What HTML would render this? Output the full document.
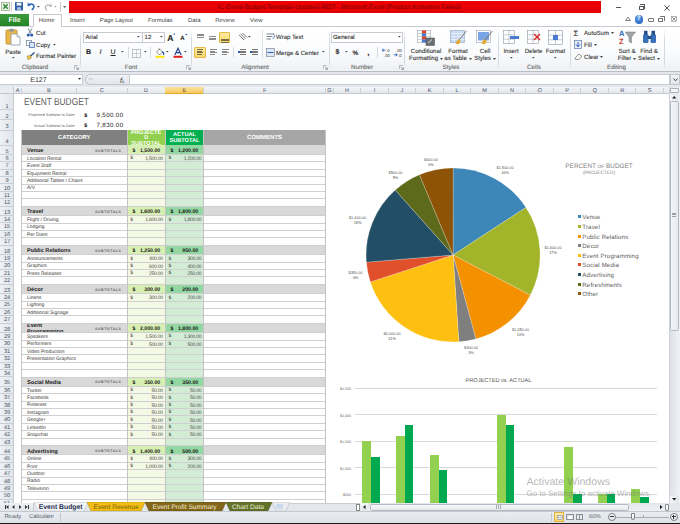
<!DOCTYPE html><html><head><meta charset="utf-8"><style>
html,body{margin:0;padding:0;width:680px;height:524px;overflow:hidden;background:#fff;}
body{position:relative;font-family:"Liberation Sans", sans-serif;text-rendering:geometricPrecision;}
div{box-sizing:border-box;}
.rb{-webkit-text-stroke:0.12px currentColor;}
</style></head><body>
<div style="position:absolute;left:0px;top:0px;width:680px;height:14px;background:#fdfdfe;"></div>
<div style="position:absolute;left:0px;top:0px;width:680px;height:13.5px;background:#ffffff;"></div>
<svg style="position:absolute;left:1px;top:1.5px" width="9" height="9" viewBox="0 0 9 9">
<rect x="0.4" y="0.4" width="8.2" height="8.2" fill="#eef4ea" stroke="#9ab08a" stroke-width="0.8"/>
<path d="M2.3 2.2 L6.7 6.8 M6.7 2.2 L2.3 6.8" stroke="#2a8a3a" stroke-width="1.5"/>
</svg>
<div style="position:absolute;left:11.2px;top:2px;width:0.8px;height:9.5px;background:#c8ccd2;"></div>
<svg style="position:absolute;left:15px;top:2px" width="8" height="8.5" viewBox="0 0 8 8.5">
<rect x="0" y="0" width="8" height="8.5" fill="#2d5ea6" rx="0.8"/>
<rect x="1.6" y="0.6" width="4.8" height="3" fill="#eef2f8"/>
<rect x="2" y="5.2" width="4" height="3.3" fill="#a8bedc"/>
</svg>
<svg style="position:absolute;left:26.5px;top:2px" width="8" height="9" viewBox="0 0 8 9">
<path d="M2 2.6 C5 1 8 3 6.5 6 L4.8 8" stroke="#2a64b8" stroke-width="1.5" fill="none"/>
<path d="M0.5 0.5 L0.8 4.6 L4 3.2 Z" fill="#2a64b8"/>
</svg>
<svg style="position:absolute;left:37.23px;top:5.59px;overflow:visible" width="2.79" height="1.62" viewBox="0 0 2.79 1.62"><path d="M0 0 H2.79 L1.40 1.62 Z" fill="#333"/></svg>
<svg style="position:absolute;left:43.5px;top:2.5px" width="8" height="8" viewBox="0 0 8 8">
<path d="M6 2.4 C3.5 0.8 0.5 2.5 1.5 5.5 L2.8 7.5" stroke="#b0b0b0" stroke-width="1.2" fill="none"/>
<path d="M7.6 0.5 L7.4 4.3 L4.6 3 Z" fill="#b0b0b0"/>
</svg>
<svg style="position:absolute;left:54.23px;top:5.59px;overflow:visible" width="2.79" height="1.62" viewBox="0 0 2.79 1.62"><path d="M0 0 H2.79 L1.40 1.62 Z" fill="#aaa"/></svg>
<div style="position:absolute;left:60.3px;top:2px;width:0.8px;height:9.5px;background:#c8ccd2;"></div>
<svg style="position:absolute;left:63.07px;top:5.81px;overflow:visible" width="3.41" height="1.98" viewBox="0 0 3.41 1.98"><path d="M0 0 H3.41 L1.71 1.98 Z" fill="#666"/></svg>
<div style="position:absolute;left:68.8px;top:1px;width:532px;height:11.5px;background:linear-gradient(#f00000,#e00000);"></div>
<div style="position:absolute;left:217.50px;top:3.86px;font-size:6.40px;line-height:7.68px;color:#8c0000;font-weight:normal;white-space:nowrap;-webkit-text-stroke:0.1px #8c0000;">IC-Event-Budget-Template-Updated-8857 - Microsoft Excel (Product Activation Failed)</div>
<div style="position:absolute;left:615.5px;top:7.2px;width:5.5px;height:0.9px;background:#555;"></div>
<div style="position:absolute;left:639px;top:5.5px;width:4.6px;height:4.6px;border:0.9px solid #555;"></div>
<div style="position:absolute;left:640.3px;top:4.2px;width:4.6px;height:4.6px;border-top:0.9px solid #555;border-right:0.9px solid #555;"></div>
<svg style="position:absolute;left:663.5px;top:4.5px" width="6" height="6" viewBox="0 0 6 6">
<path d="M0.3 0.3 L5.7 5.7 M5.7 0.3 L0.3 5.7" stroke="#444" stroke-width="0.9"/></svg>
<div style="position:absolute;left:0px;top:13.5px;width:680px;height:12.5px;background:#ffffff;"></div>
<div style="position:absolute;left:0px;top:13.8px;width:29px;height:12px;background:linear-gradient(#3e9a3e,#228422);"></div>
<div style="position:absolute;left:-85.50px;top:16.50px;width:200px;text-align:center;font-size:7.00px;line-height:8.40px;color:#ffffff;font-weight:bold;white-space:nowrap;">File</div>
<div style="position:absolute;left:32.5px;top:13.5px;width:29.5px;height:13px;background:#ffffff;border:1px solid #c5cad1;border-bottom:none;"></div>
<div style="position:absolute;left:-53.40px;top:17.66px;width:200px;text-align:center;font-size:5.90px;line-height:7.08px;color:#444;font-weight:normal;white-space:nowrap;">Home</div>
<div style="position:absolute;left:-22.70px;top:17.66px;width:200px;text-align:center;font-size:5.90px;line-height:7.08px;color:#444;font-weight:normal;white-space:nowrap;">Insert</div>
<div style="position:absolute;left:16.30px;top:17.66px;width:200px;text-align:center;font-size:5.90px;line-height:7.08px;color:#444;font-weight:normal;white-space:nowrap;">Page Layout</div>
<div style="position:absolute;left:60.20px;top:17.66px;width:200px;text-align:center;font-size:5.90px;line-height:7.08px;color:#444;font-weight:normal;white-space:nowrap;">Formulas</div>
<div style="position:absolute;left:94.30px;top:17.66px;width:200px;text-align:center;font-size:5.90px;line-height:7.08px;color:#444;font-weight:normal;white-space:nowrap;">Data</div>
<div style="position:absolute;left:125.00px;top:17.66px;width:200px;text-align:center;font-size:5.90px;line-height:7.08px;color:#444;font-weight:normal;white-space:nowrap;">Review</div>
<div style="position:absolute;left:156.10px;top:17.66px;width:200px;text-align:center;font-size:5.90px;line-height:7.08px;color:#444;font-weight:normal;white-space:nowrap;">View</div>
<div style="position:absolute;left:0px;top:25.5px;width:32.5px;height:1px;background:#c5cad1;"></div>
<div style="position:absolute;left:62px;top:25.5px;width:618px;height:1px;background:#c5cad1;"></div>
<svg style="position:absolute;left:625px;top:16px" width="6" height="5" viewBox="0 0 6 5">
<path d="M0.5 4.5 L3 1 L5.5 4.5 Z" fill="none" stroke="#666" stroke-width="0.8"/></svg>
<div style="position:absolute;left:634.5px;top:15.2px;width:8.5px;height:8.5px;border-radius:50%;background:radial-gradient(circle at 40% 35%,#5a9ae6,#1f5cb8);color:#fff;font-size:6.5px;line-height:8.5px;text-align:center;font-weight:bold;">?</div>
<div style="position:absolute;left:648px;top:18px;width:6px;height:3.5px;border:0.8px solid #777;border-radius:1px;"></div>
<div style="position:absolute;left:658px;top:17.5px;width:5px;height:4.5px;border:0.8px solid #777;"></div>
<div style="position:absolute;left:659.5px;top:16px;width:5px;height:4.5px;border-top:0.8px solid #777;border-right:0.8px solid #777;"></div>
<svg style="position:absolute;left:671px;top:16px" width="6" height="6" viewBox="0 0 6 6">
<rect x="0.4" y="0.4" width="5.2" height="5.2" fill="none" stroke="#888" stroke-width="0.6"/>
<path d="M1.2 1.2 L4.8 4.8 M4.8 1.2 L1.2 4.8" stroke="#666" stroke-width="0.7"/></svg>
<div class="rb">
<div style="position:absolute;left:0px;top:26.5px;width:680px;height:44.5px;background:linear-gradient(#ffffff 0%,#fbfcfd 55%,#eef1f4 100%);"></div>
<div style="position:absolute;left:0px;top:70.5px;width:680px;height:1.5px;background:#b9bec6;"></div>
<div style="position:absolute;left:79.6px;top:28px;width:1px;height:42px;background:linear-gradient(rgba(210,214,220,0),#d5d9df 30%,#d5d9df 80%,rgba(210,214,220,0));"></div>
<div style="position:absolute;left:191.2px;top:28px;width:1px;height:42px;background:linear-gradient(rgba(210,214,220,0),#d5d9df 30%,#d5d9df 80%,rgba(210,214,220,0));"></div>
<div style="position:absolute;left:328.5px;top:28px;width:1px;height:42px;background:linear-gradient(rgba(210,214,220,0),#d5d9df 30%,#d5d9df 80%,rgba(210,214,220,0));"></div>
<div style="position:absolute;left:404.4px;top:28px;width:1px;height:42px;background:linear-gradient(rgba(210,214,220,0),#d5d9df 30%,#d5d9df 80%,rgba(210,214,220,0));"></div>
<div style="position:absolute;left:497.8px;top:28px;width:1px;height:42px;background:linear-gradient(rgba(210,214,220,0),#d5d9df 30%,#d5d9df 80%,rgba(210,214,220,0));"></div>
<div style="position:absolute;left:569.7px;top:28px;width:1px;height:42px;background:linear-gradient(rgba(210,214,220,0),#d5d9df 30%,#d5d9df 80%,rgba(210,214,220,0));"></div>
<div style="position:absolute;left:664px;top:28px;width:1px;height:42px;background:linear-gradient(rgba(210,214,220,0),#d5d9df 30%,#d5d9df 80%,rgba(210,214,220,0));"></div>
<div style="position:absolute;left:-65.00px;top:63.98px;width:200px;text-align:center;font-size:6.20px;line-height:7.44px;color:#6f6f6f;font-weight:normal;white-space:nowrap;">Clipboard</div>
<div style="position:absolute;left:31.00px;top:63.98px;width:200px;text-align:center;font-size:6.20px;line-height:7.44px;color:#6f6f6f;font-weight:normal;white-space:nowrap;">Font</div>
<div style="position:absolute;left:155.00px;top:63.98px;width:200px;text-align:center;font-size:6.20px;line-height:7.44px;color:#6f6f6f;font-weight:normal;white-space:nowrap;">Alignment</div>
<div style="position:absolute;left:262.00px;top:63.98px;width:200px;text-align:center;font-size:6.20px;line-height:7.44px;color:#6f6f6f;font-weight:normal;white-space:nowrap;">Number</div>
<div style="position:absolute;left:351.00px;top:63.98px;width:200px;text-align:center;font-size:6.20px;line-height:7.44px;color:#6f6f6f;font-weight:normal;white-space:nowrap;">Styles</div>
<div style="position:absolute;left:434.00px;top:63.98px;width:200px;text-align:center;font-size:6.20px;line-height:7.44px;color:#6f6f6f;font-weight:normal;white-space:nowrap;">Cells</div>
<div style="position:absolute;left:516.50px;top:63.98px;width:200px;text-align:center;font-size:6.20px;line-height:7.44px;color:#6f6f6f;font-weight:normal;white-space:nowrap;">Editing</div>
<svg style="position:absolute;left:74px;top:64.5px" width="5" height="5" viewBox="0 0 5 5"><path d="M0.4 4 V0.4 H4" stroke="#9a9ea4" stroke-width="0.7" fill="none"/><path d="M1.8 1.8 L4.2 4.2 M4.4 2.4 V4.4 H2.4" stroke="#6a6e74" stroke-width="0.6" fill="none"/></svg>
<svg style="position:absolute;left:186px;top:64.5px" width="5" height="5" viewBox="0 0 5 5"><path d="M0.4 4 V0.4 H4" stroke="#9a9ea4" stroke-width="0.7" fill="none"/><path d="M1.8 1.8 L4.2 4.2 M4.4 2.4 V4.4 H2.4" stroke="#6a6e74" stroke-width="0.6" fill="none"/></svg>
<svg style="position:absolute;left:322.5px;top:64.5px" width="5" height="5" viewBox="0 0 5 5"><path d="M0.4 4 V0.4 H4" stroke="#9a9ea4" stroke-width="0.7" fill="none"/><path d="M1.8 1.8 L4.2 4.2 M4.4 2.4 V4.4 H2.4" stroke="#6a6e74" stroke-width="0.6" fill="none"/></svg>
<svg style="position:absolute;left:398.5px;top:64.5px" width="5" height="5" viewBox="0 0 5 5"><path d="M0.4 4 V0.4 H4" stroke="#9a9ea4" stroke-width="0.7" fill="none"/><path d="M1.8 1.8 L4.2 4.2 M4.4 2.4 V4.4 H2.4" stroke="#6a6e74" stroke-width="0.6" fill="none"/></svg>
<svg style="position:absolute;left:5px;top:28px" width="17" height="18" viewBox="0 0 17 18">
<rect x="1" y="2" width="11" height="14" rx="1" fill="#e9b84a" stroke="#b88a2a" stroke-width="0.8"/>
<rect x="4" y="0.8" width="5" height="3" rx="1" fill="#9a9a9a"/>
<path d="M6 6 L12 6 L15 9 L15 17 L6 17 Z" fill="#ffffff" stroke="#8c97a6" stroke-width="0.8"/>
<path d="M12 6 L12 9 L15 9" fill="#dde3ea" stroke="#8c97a6" stroke-width="0.6"/>
</svg>
<div style="position:absolute;left:-87.00px;top:48.74px;width:200px;text-align:center;font-size:6.10px;line-height:7.32px;color:#3c3c3c;font-weight:normal;white-space:nowrap;">Paste</div>
<svg style="position:absolute;left:11.61px;top:56.99px;overflow:visible" width="2.79" height="1.62" viewBox="0 0 2.79 1.62"><path d="M0 0 H2.79 L1.40 1.62 Z" fill="#444"/></svg>
<svg style="position:absolute;left:26px;top:28px" width="8" height="9" viewBox="0 0 8 9">
<path d="M2 0.5 L5 5.5 M6 0.5 L3 5.5" stroke="#6a7a8c" stroke-width="0.9"/>
<circle cx="2.3" cy="7" r="1.6" fill="#2c5fae"/><circle cx="5.7" cy="7" r="1.6" fill="#2c5fae"/>
</svg>
<div style="position:absolute;left:36.00px;top:30.24px;font-size:6.10px;line-height:7.32px;color:#3c3c3c;font-weight:normal;white-space:nowrap;">Cut</div>
<svg style="position:absolute;left:25.5px;top:40px" width="9" height="8" viewBox="0 0 9 8">
<rect x="0.5" y="0.5" width="5" height="5" fill="#fff" stroke="#7a8aa0" stroke-width="0.8"/>
<rect x="3.5" y="2.5" width="5" height="5" fill="#d9e6f6" stroke="#4a72b0" stroke-width="0.8"/>
</svg>
<div style="position:absolute;left:36.00px;top:42.24px;font-size:6.10px;line-height:7.32px;color:#3c3c3c;font-weight:normal;white-space:nowrap;">Copy</div>
<svg style="position:absolute;left:53.23px;top:43.79px;overflow:visible" width="2.79" height="1.62" viewBox="0 0 2.79 1.62"><path d="M0 0 H2.79 L1.40 1.62 Z" fill="#444"/></svg>
<svg style="position:absolute;left:25.5px;top:52px" width="9" height="8" viewBox="0 0 9 8">
<path d="M8.5 0.5 L4 4.5" stroke="#2c4f90" stroke-width="1.4"/>
<path d="M1 4 L4.5 3.5 L5.5 6 L2 7.8 Z" fill="#e7c24e" stroke="#9a8030" stroke-width="0.5"/>
</svg>
<div style="position:absolute;left:36.00px;top:53.44px;font-size:6.10px;line-height:7.32px;color:#3c3c3c;font-weight:normal;white-space:nowrap;">Format Painter</div>
<div style="position:absolute;left:83px;top:31.5px;width:59.5px;height:11px;background:#fff;border:1px solid #c7cbd1;"></div>
<div style="position:absolute;left:85.50px;top:34.44px;font-size:6.10px;line-height:7.32px;color:#333;font-weight:normal;white-space:nowrap;">Arial</div>
<svg style="position:absolute;left:137.22px;top:36.19px;overflow:visible" width="2.79" height="1.62" viewBox="0 0 2.79 1.62"><path d="M0 0 H2.79 L1.40 1.62 Z" fill="#444"/></svg>
<div style="position:absolute;left:142.2px;top:31.5px;width:22.4px;height:11px;background:#fff;border:1px solid #c7cbd1;"></div>
<div style="position:absolute;left:144.50px;top:34.44px;font-size:6.10px;line-height:7.32px;color:#333;font-weight:normal;white-space:nowrap;">12</div>
<svg style="position:absolute;left:160.22px;top:36.19px;overflow:visible" width="2.79" height="1.62" viewBox="0 0 2.79 1.62"><path d="M0 0 H2.79 L1.40 1.62 Z" fill="#444"/></svg>
<div style="position:absolute;left:167.30px;top:33.34px;font-size:8.60px;line-height:10.32px;color:#2a2a2a;font-weight:bold;white-space:nowrap;font-family:"Liberation Serif",serif;">A</div>
<svg style="position:absolute;left:172.70px;top:32.78px;overflow:visible" width="2.48" height="1.44" viewBox="0 0 2.48 1.44"><path d="M0 1.44 H2.48 L1.24 0 Z" fill="#2b5fb4"/></svg>
<div style="position:absolute;left:180.20px;top:35.90px;font-size:6.00px;line-height:7.20px;color:#2a2a2a;font-weight:bold;white-space:nowrap;font-family:"Liberation Serif",serif;">A</div>
<svg style="position:absolute;left:184.70px;top:33.78px;overflow:visible" width="2.48" height="1.44" viewBox="0 0 2.48 1.44"><path d="M0 0 H2.48 L1.24 1.44 Z" fill="#2b5fb4"/></svg>
<div style="position:absolute;left:86.00px;top:49.20px;font-size:7.00px;line-height:8.40px;color:#222;font-weight:bold;white-space:nowrap;font-family:"Liberation Serif",serif;">B</div>
<div style="position:absolute;left:99.50px;top:49.20px;font-size:7.00px;line-height:8.40px;color:#222;font-weight:normal;white-space:nowrap;font-style:italic;font-family:"Liberation Serif",serif;">I</div>
<div style="position:absolute;left:110.50px;top:49.20px;font-size:7.00px;line-height:8.40px;color:#222;font-weight:normal;white-space:nowrap;text-decoration:underline;font-family:"Liberation Serif",serif;">U</div>
<svg style="position:absolute;left:121.22px;top:51.39px;overflow:visible" width="2.79" height="1.62" viewBox="0 0 2.79 1.62"><path d="M0 0 H2.79 L1.40 1.62 Z" fill="#444"/></svg>
<div style="position:absolute;left:127.5px;top:47px;width:1px;height:11px;background:#d8dce2;"></div>
<svg style="position:absolute;left:132px;top:48.5px" width="9" height="9" viewBox="0 0 9 9">
<rect x="0.5" y="0.5" width="8" height="8" fill="none" stroke="#b0b4ba" stroke-width="0.8"/>
<path d="M4.5 0.5 V8.5 M0.5 4.5 H8.5" stroke="#b0b4ba" stroke-width="0.6"/></svg>
<svg style="position:absolute;left:144.22px;top:51.39px;overflow:visible" width="2.79" height="1.62" viewBox="0 0 2.79 1.62"><path d="M0 0 H2.79 L1.40 1.62 Z" fill="#444"/></svg>
<div style="position:absolute;left:149.5px;top:47px;width:1px;height:11px;background:#d8dce2;"></div>
<svg style="position:absolute;left:154.5px;top:46.5px" width="10" height="11" viewBox="0 0 10 11">
<path d="M1.5 5 L4.5 2 L7.5 5 L4.5 8 Z" fill="#fff" stroke="#666" stroke-width="0.7"/>
<path d="M4 1 L4.5 3" stroke="#666" stroke-width="0.6"/>
<path d="M7 4.5 C8.8 5.5 9.2 7 8.3 7.8" stroke="#1f4fa8" stroke-width="1.3" fill="none"/>
<rect x="0.5" y="8.8" width="9" height="2" fill="#ffe600"/></svg>
<svg style="position:absolute;left:165.72px;top:51.39px;overflow:visible" width="2.79" height="1.62" viewBox="0 0 2.79 1.62"><path d="M0 0 H2.79 L1.40 1.62 Z" fill="#444"/></svg>
<svg style="position:absolute;left:172.5px;top:46.5px" width="10" height="11" viewBox="0 0 10 11">
<path d="M1.8 8 L5 1.2 L8.2 8 M3.2 5.6 H6.8" stroke="#1f3f8f" stroke-width="1.1" fill="none"/>
<rect x="0.5" y="8.8" width="9" height="2" fill="#e02020"/></svg>
<svg style="position:absolute;left:184.22px;top:51.39px;overflow:visible" width="2.79" height="1.62" viewBox="0 0 2.79 1.62"><path d="M0 0 H2.79 L1.40 1.62 Z" fill="#444"/></svg>
<div style="position:absolute;left:196.5px;top:33.5px;width:7.5px;height:1px;background:#8a8a8a;"></div>
<div style="position:absolute;left:196.5px;top:35.1px;width:7.5px;height:1px;background:#8a8a8a;"></div>
<div style="position:absolute;left:196.5px;top:36.7px;width:7.5px;height:1px;background:#8a8a8a;"></div>
<div style="position:absolute;left:208.5px;top:36.0px;width:7.5px;height:1px;background:#8a8a8a;"></div>
<div style="position:absolute;left:208.5px;top:37.6px;width:7.5px;height:1px;background:#8a8a8a;"></div>
<div style="position:absolute;left:208.5px;top:39.2px;width:7.5px;height:1px;background:#8a8a8a;"></div>
<div style="position:absolute;left:219.2px;top:31.7px;width:11px;height:11.2px;background:linear-gradient(#fdeba0,#fbd970);border:1px solid #e3b948;border-radius:1px;"></div>
<div style="position:absolute;left:221px;top:38.5px;width:7.5px;height:1px;background:#7a6a40;"></div>
<div style="position:absolute;left:221px;top:40.1px;width:7.5px;height:1px;background:#7a6a40;"></div>
<div style="position:absolute;left:221px;top:41.7px;width:7.5px;height:1px;background:#7a6a40;"></div>
<svg style="position:absolute;left:238px;top:33px" width="14" height="9" viewBox="0 0 14 9">
<path d="M1 2 L6 7 M2.5 0.8 L7.5 5.8 M4 -0.5 L9 4.5" stroke="#555" stroke-width="0.8"/></svg>
<svg style="position:absolute;left:248.22px;top:36.19px;overflow:visible" width="2.79" height="1.62" viewBox="0 0 2.79 1.62"><path d="M0 0 H2.79 L1.40 1.62 Z" fill="#444"/></svg>
<div style="position:absolute;left:194.2px;top:46.7px;width:12px;height:11.5px;background:linear-gradient(#fdeba0,#fbd970);border:1px solid #e3b948;border-radius:1px;"></div>
<div style="position:absolute;left:196.5px;top:49.0px;width:6.5px;height:1px;background:#7a6a40;"></div>
<div style="position:absolute;left:196.5px;top:50.7px;width:5px;height:1px;background:#7a6a40;"></div>
<div style="position:absolute;left:196.5px;top:52.4px;width:6.5px;height:1px;background:#7a6a40;"></div>
<div style="position:absolute;left:196.5px;top:54.1px;width:5px;height:1px;background:#7a6a40;"></div>
<div style="position:absolute;left:209.5px;top:49.0px;width:7px;height:1px;background:#8a8a8a;"></div>
<div style="position:absolute;left:209.5px;top:50.7px;width:5px;height:1px;background:#8a8a8a;"></div>
<div style="position:absolute;left:209.5px;top:52.4px;width:7px;height:1px;background:#8a8a8a;"></div>
<div style="position:absolute;left:209.5px;top:54.1px;width:5px;height:1px;background:#8a8a8a;"></div>
<div style="position:absolute;left:221.5px;top:49.0px;width:7px;height:1px;background:#8a8a8a;"></div>
<div style="position:absolute;left:221.5px;top:50.7px;width:5px;height:1px;background:#8a8a8a;"></div>
<div style="position:absolute;left:221.5px;top:52.4px;width:7px;height:1px;background:#8a8a8a;"></div>
<div style="position:absolute;left:221.5px;top:54.1px;width:5px;height:1px;background:#8a8a8a;"></div>
<div style="position:absolute;left:233px;top:47px;width:1px;height:11px;background:#d8dce2;"></div>
<div style="position:absolute;left:240px;top:49.0px;width:6px;height:1px;background:#777;"></div>
<div style="position:absolute;left:240px;top:50.7px;width:6px;height:1px;background:#777;"></div>
<div style="position:absolute;left:240px;top:52.4px;width:6px;height:1px;background:#777;"></div>
<div style="position:absolute;left:240px;top:54.1px;width:6px;height:1px;background:#777;"></div>
<div style="position:absolute;left:238px;top:51px;width:2px;height:2px;background:#2b5fb4;"></div>
<div style="position:absolute;left:252px;top:49.0px;width:6px;height:1px;background:#777;"></div>
<div style="position:absolute;left:252px;top:50.7px;width:6px;height:1px;background:#777;"></div>
<div style="position:absolute;left:252px;top:52.4px;width:6px;height:1px;background:#777;"></div>
<div style="position:absolute;left:252px;top:54.1px;width:6px;height:1px;background:#777;"></div>
<div style="position:absolute;left:250px;top:51px;width:2px;height:2px;background:#2b5fb4;"></div>
<div style="position:absolute;left:261.5px;top:30px;width:0.8px;height:29px;background:#dde1e6;"></div>
<svg style="position:absolute;left:265.5px;top:33px" width="9" height="8" viewBox="0 0 9 8">
<path d="M0.5 1 H8 M0.5 3.5 H6.5 M0.5 6 H5" stroke="#7a8090" stroke-width="1"/>
<path d="M7.5 1 C9 2 9 5 6.5 5.5" stroke="#2b5fb4" stroke-width="0.8" fill="none"/></svg>
<div style="position:absolute;left:276.00px;top:34.44px;font-size:6.10px;line-height:7.32px;color:#3c3c3c;font-weight:normal;white-space:nowrap;">Wrap Text</div>
<svg style="position:absolute;left:265.5px;top:48px" width="9" height="9" viewBox="0 0 9 9">
<rect x="0.5" y="0.5" width="8" height="8" fill="#dde7f5" stroke="#7a8aa0" stroke-width="0.7"/>
<path d="M1.5 4.5 H7.5" stroke="#2b5fb4" stroke-width="1"/></svg>
<div style="position:absolute;left:276.00px;top:49.74px;font-size:6.10px;line-height:7.32px;color:#3c3c3c;font-weight:normal;white-space:nowrap;">Merge &amp; Center</div>
<svg style="position:absolute;left:322.23px;top:51.39px;overflow:visible" width="2.79" height="1.62" viewBox="0 0 2.79 1.62"><path d="M0 0 H2.79 L1.40 1.62 Z" fill="#444"/></svg>
<div style="position:absolute;left:331px;top:31.5px;width:71.5px;height:11px;background:#fff;border:1px solid #c7cbd1;"></div>
<div style="position:absolute;left:333.00px;top:34.44px;font-size:6.10px;line-height:7.32px;color:#333;font-weight:normal;white-space:nowrap;">General</div>
<svg style="position:absolute;left:397.73px;top:36.19px;overflow:visible" width="2.79" height="1.62" viewBox="0 0 2.79 1.62"><path d="M0 0 H2.79 L1.40 1.62 Z" fill="#444"/></svg>
<div style="position:absolute;left:335.50px;top:49.30px;font-size:7.00px;line-height:8.40px;color:#333;font-weight:bold;white-space:nowrap;">$</div>
<svg style="position:absolute;left:345.23px;top:51.39px;overflow:visible" width="2.79" height="1.62" viewBox="0 0 2.79 1.62"><path d="M0 0 H2.79 L1.40 1.62 Z" fill="#444"/></svg>
<div style="position:absolute;left:352.50px;top:49.66px;font-size:6.40px;line-height:7.68px;color:#333;font-weight:bold;white-space:nowrap;">%</div>
<div style="position:absolute;left:367.20px;top:47.60px;font-size:8.00px;line-height:9.60px;color:#222;font-weight:bold;white-space:nowrap;">,</div>
<div style="position:absolute;left:376.5px;top:47px;width:1px;height:11px;background:#d8dce2;"></div>
<svg style="position:absolute;left:380.5px;top:47.5px" width="10" height="9" viewBox="0 0 10 9">
<path d="M1 2.2 H4.5 M1 2.2 L2.6 0.9 M1 2.2 L2.6 3.5" stroke="#2b64c0" stroke-width="0.9" fill="none"/>
<text x="5" y="3.8" font-size="4.2" font-family="Liberation Sans" fill="#333">.0</text>
<text x="3" y="8.6" font-size="4.2" font-family="Liberation Sans" fill="#333">.00</text></svg>
<svg style="position:absolute;left:392.5px;top:47.5px" width="10" height="9" viewBox="0 0 10 9">
<text x="3" y="3.8" font-size="4.2" font-family="Liberation Sans" fill="#333">.00</text>
<path d="M0.8 6.8 H4.3 M4.3 6.8 L2.7 5.5 M4.3 6.8 L2.7 8.1" stroke="#2b64c0" stroke-width="0.9" fill="none"/>
<text x="5" y="8.6" font-size="4.2" font-family="Liberation Sans" fill="#333">.0</text></svg>
<svg style="position:absolute;left:417px;top:29.5px" width="18" height="16" viewBox="0 0 18 16">
<rect x="0.5" y="0.5" width="13" height="12" fill="#fff" stroke="#9aa4b0" stroke-width="0.6"/>
<path d="M0.5 3.5 H13.5 M0.5 6.5 H13.5 M0.5 9.5 H13.5 M5 0.5 V12.5 M9 0.5 V12.5" stroke="#9aa4b0" stroke-width="0.5"/>
<rect x="5" y="0.5" width="4" height="3" fill="#e0402a"/>
<rect x="5" y="3.5" width="4" height="3" fill="#4a7ad0"/>
<rect x="5" y="6.5" width="4" height="3" fill="#e0402a"/>
<rect x="5" y="9.5" width="4" height="3" fill="#4a7ad0"/>
<rect x="9" y="8" width="8.5" height="7.5" fill="#6a6f76" stroke="#444" stroke-width="0.5"/>
<path d="M11 13 L15 9.5" stroke="#fff" stroke-width="0.8"/></svg>
<div style="position:absolute;left:326.00px;top:48.24px;width:200px;text-align:center;font-size:6.10px;line-height:7.32px;color:#3c3c3c;font-weight:normal;white-space:nowrap;">Conditional</div>
<div style="position:absolute;left:326.00px;top:55.24px;width:200px;text-align:center;font-size:6.10px;line-height:7.32px;color:#3c3c3c;font-weight:normal;white-space:nowrap;">Formatting<svg style="display:inline-block;vertical-align:0.12em;margin-left:0.3em" width="3" height="2" viewBox="0 0 3 2"><path d="M0 0H3L1.5 2Z" fill="#444"/></svg></div>
<svg style="position:absolute;left:450px;top:29.5px" width="17" height="15" viewBox="0 0 17 15">
<rect x="0.5" y="0.5" width="14" height="12" fill="#c5d8f2" stroke="#8aa0c0" stroke-width="0.6"/>
<path d="M0.5 3.5 H14.5 M0.5 6.5 H14.5 M0.5 9.5 H14.5 M4 0.5 V12.5 M8 0.5 V12.5 M11 0.5 V12.5" stroke="#fff" stroke-width="0.5"/>
<path d="M16.5 1 L9 10" stroke="#777" stroke-width="1"/>
<path d="M8 9 L11 11 L8.5 14.5 L5.5 13.5 Z" fill="#e2a932"/></svg>
<div style="position:absolute;left:358.00px;top:48.24px;width:200px;text-align:center;font-size:6.10px;line-height:7.32px;color:#3c3c3c;font-weight:normal;white-space:nowrap;">Format</div>
<div style="position:absolute;left:358.00px;top:55.24px;width:200px;text-align:center;font-size:6.10px;line-height:7.32px;color:#3c3c3c;font-weight:normal;white-space:nowrap;">as Table<svg style="display:inline-block;vertical-align:0.12em;margin-left:0.3em" width="3" height="2" viewBox="0 0 3 2"><path d="M0 0H3L1.5 2Z" fill="#444"/></svg></div>
<svg style="position:absolute;left:476px;top:29.5px" width="17" height="15" viewBox="0 0 17 15">
<rect x="0.5" y="0.5" width="14" height="12" fill="#fff" stroke="#9aa4b0" stroke-width="0.6"/>
<rect x="2" y="2" width="11" height="8.5" fill="#7ba4e6"/>
<path d="M16.5 1 L9 10" stroke="#777" stroke-width="1"/>
<path d="M8 9 L11 11 L8.5 14.5 L5.5 13.5 Z" fill="#e2a932"/></svg>
<div style="position:absolute;left:385.00px;top:48.24px;width:200px;text-align:center;font-size:6.10px;line-height:7.32px;color:#3c3c3c;font-weight:normal;white-space:nowrap;">Cell</div>
<div style="position:absolute;left:385.00px;top:55.24px;width:200px;text-align:center;font-size:6.10px;line-height:7.32px;color:#3c3c3c;font-weight:normal;white-space:nowrap;">Styles<svg style="display:inline-block;vertical-align:0.12em;margin-left:0.3em" width="3" height="2" viewBox="0 0 3 2"><path d="M0 0H3L1.5 2Z" fill="#444"/></svg></div>
<svg style="position:absolute;left:503px;top:30px" width="12" height="14" viewBox="0 0 12 14">
<rect x="0.5" y="0.5" width="11" height="13" fill="#fff" stroke="#8a96a6" stroke-width="0.6"/>
<path d="M0.5 4.8 H11.5 M0.5 9.2 H11.5 M6.0 0.5 V13.5" stroke="#8a96a6" stroke-width="0.5"/></svg>
<div style="position:absolute;left:510px;top:36px;width:9px;height:3px;background:#4a7ad0;"></div>
<div style="position:absolute;left:411.00px;top:48.24px;width:200px;text-align:center;font-size:6.10px;line-height:7.32px;color:#3c3c3c;font-weight:normal;white-space:nowrap;">Insert</div>
<svg style="position:absolute;left:509.61px;top:56.79px;overflow:visible" width="2.79" height="1.62" viewBox="0 0 2.79 1.62"><path d="M0 0 H2.79 L1.40 1.62 Z" fill="#444"/></svg>
<svg style="position:absolute;left:527px;top:30px" width="12" height="14" viewBox="0 0 12 14">
<rect x="0.5" y="0.5" width="11" height="13" fill="#fff" stroke="#8a96a6" stroke-width="0.6"/>
<path d="M0.5 4.8 H11.5 M0.5 9.2 H11.5 M6.0 0.5 V13.5" stroke="#8a96a6" stroke-width="0.5"/></svg>
<svg style="position:absolute;left:533px;top:33px" width="8" height="8" viewBox="0 0 8 8">
<path d="M1 1 L7 7 M7 1 L1 7" stroke="#e02020" stroke-width="1.3"/></svg>
<div style="position:absolute;left:433.50px;top:48.24px;width:200px;text-align:center;font-size:6.10px;line-height:7.32px;color:#3c3c3c;font-weight:normal;white-space:nowrap;">Delete</div>
<svg style="position:absolute;left:532.11px;top:56.79px;overflow:visible" width="2.79" height="1.62" viewBox="0 0 2.79 1.62"><path d="M0 0 H2.79 L1.40 1.62 Z" fill="#444"/></svg>
<svg style="position:absolute;left:547.5px;top:30px" width="15" height="15" viewBox="0 0 15 15">
<rect x="0.5" y="0.5" width="14" height="14" fill="#fff" stroke="#8a96a6" stroke-width="0.6"/>
<path d="M0.5 5.2 H14.5 M0.5 9.8 H14.5 M7.5 0.5 V14.5" stroke="#8a96a6" stroke-width="0.5"/></svg>
<div style="position:absolute;left:552.5px;top:35px;width:5px;height:5px;background:#4a7ad0;"></div>
<div style="position:absolute;left:455.50px;top:48.24px;width:200px;text-align:center;font-size:6.10px;line-height:7.32px;color:#3c3c3c;font-weight:normal;white-space:nowrap;">Format</div>
<svg style="position:absolute;left:554.11px;top:56.79px;overflow:visible" width="2.79" height="1.62" viewBox="0 0 2.79 1.62"><path d="M0 0 H2.79 L1.40 1.62 Z" fill="#444"/></svg>
<div style="position:absolute;left:573.50px;top:28.90px;font-size:7.50px;line-height:9.00px;color:#333;font-weight:normal;white-space:nowrap;">Σ</div>
<div style="position:absolute;left:584.00px;top:29.74px;font-size:6.10px;line-height:7.32px;color:#3c3c3c;font-weight:normal;white-space:nowrap;">AutoSum<svg style="display:inline-block;vertical-align:0.12em;margin-left:0.3em" width="3" height="2" viewBox="0 0 3 2"><path d="M0 0H3L1.5 2Z" fill="#444"/></svg></div>
<svg style="position:absolute;left:573.5px;top:40px" width="8" height="9" viewBox="0 0 8 9">
<rect x="0.5" y="0.5" width="7" height="8" fill="#e8eef8" stroke="#5a7ab0" stroke-width="0.7"/>
<path d="M4 2 V6.5 M2 4.5 L4 6.8 L6 4.5" stroke="#2b5fb4" stroke-width="1" fill="none"/></svg>
<div style="position:absolute;left:584.00px;top:41.74px;font-size:6.10px;line-height:7.32px;color:#3c3c3c;font-weight:normal;white-space:nowrap;">Fill<svg style="display:inline-block;vertical-align:0.12em;margin-left:0.3em" width="3" height="2" viewBox="0 0 3 2"><path d="M0 0H3L1.5 2Z" fill="#444"/></svg></div>
<svg style="position:absolute;left:573.5px;top:53px" width="9" height="7" viewBox="0 0 9 7">
<path d="M1 5 L5 1 L8 3.5 L4.5 6.5 L1.5 6.5 Z" fill="#fff" stroke="#666" stroke-width="0.7"/></svg>
<div style="position:absolute;left:584.00px;top:53.74px;font-size:6.10px;line-height:7.32px;color:#3c3c3c;font-weight:normal;white-space:nowrap;">Clear<svg style="display:inline-block;vertical-align:0.12em;margin-left:0.3em" width="3" height="2" viewBox="0 0 3 2"><path d="M0 0H3L1.5 2Z" fill="#444"/></svg></div>
<svg style="position:absolute;left:619px;top:29px" width="17" height="16" viewBox="0 0 17 16">
<text x="0" y="7" font-size="7.5" font-family="Liberation Sans" font-weight="bold" fill="#2b5fb4">A</text>
<text x="0" y="15" font-size="7.5" font-family="Liberation Sans" font-weight="bold" fill="#c0392b">Z</text>
<path d="M6 3 H16.5 L12.5 8 V14 L10 12.5 V8 Z" fill="#a0a4aa" stroke="#777" stroke-width="0.5"/></svg>
<div style="position:absolute;left:527.00px;top:48.24px;width:200px;text-align:center;font-size:6.10px;line-height:7.32px;color:#3c3c3c;font-weight:normal;white-space:nowrap;">Sort &amp;</div>
<div style="position:absolute;left:527.00px;top:55.24px;width:200px;text-align:center;font-size:6.10px;line-height:7.32px;color:#3c3c3c;font-weight:normal;white-space:nowrap;">Filter<svg style="display:inline-block;vertical-align:0.12em;margin-left:0.3em" width="3" height="2" viewBox="0 0 3 2"><path d="M0 0H3L1.5 2Z" fill="#444"/></svg></div>
<svg style="position:absolute;left:642px;top:30px" width="15" height="14" viewBox="0 0 15 14">
<rect x="1" y="4" width="5.5" height="9" rx="1.5" fill="#3a6fb8"/>
<rect x="8.5" y="4" width="5.5" height="9" rx="1.5" fill="#3a6fb8"/>
<rect x="2" y="0.8" width="3.5" height="4" fill="#26508c"/>
<rect x="9.5" y="0.8" width="3.5" height="4" fill="#26508c"/>
<rect x="5.5" y="6" width="4" height="3" fill="#26508c"/></svg>
<div style="position:absolute;left:549.00px;top:48.24px;width:200px;text-align:center;font-size:6.10px;line-height:7.32px;color:#3c3c3c;font-weight:normal;white-space:nowrap;">Find &amp;</div>
<div style="position:absolute;left:549.00px;top:55.24px;width:200px;text-align:center;font-size:6.10px;line-height:7.32px;color:#3c3c3c;font-weight:normal;white-space:nowrap;">Select<svg style="display:inline-block;vertical-align:0.12em;margin-left:0.3em" width="3" height="2" viewBox="0 0 3 2"><path d="M0 0H3L1.5 2Z" fill="#444"/></svg></div>
</div>
<div style="position:absolute;left:0px;top:72px;width:680px;height:15px;background:#e4e8ed;"></div>
<div style="position:absolute;left:0px;top:73.5px;width:83px;height:11.5px;background:#fff;border:1px solid #c9cdd3;border-left:none;"></div>
<div style="position:absolute;left:-61.50px;top:76.80px;width:200px;text-align:center;font-size:7.00px;line-height:8.40px;color:#333;font-weight:normal;white-space:nowrap;">E127</div>
<svg style="position:absolute;left:78.25px;top:78.30px;overflow:visible" width="3.10" height="1.80" viewBox="0 0 3.10 1.80"><path d="M0 0 H3.10 L1.55 1.80 Z" fill="#222"/></svg>
<div style="position:absolute;left:84.5px;top:73.5px;width:45px;height:11.5px;background:linear-gradient(#f1f3f6,#e3e6ea);border:1px solid #c2c7ce;border-right:none;border-radius:6px 0 0 6px;"></div>
<svg style="position:absolute;left:88px;top:76.5px" width="5" height="3" viewBox="0 0 5 3"><path d="M0.5 2.5 Q2.5 0 4.5 2.5" stroke="#aaa" stroke-width="0.7" fill="none"/></svg>
<div style="position:absolute;left:120.00px;top:75.70px;font-size:7.50px;line-height:9.00px;color:#333;font-weight:normal;white-space:nowrap;font-family:"Liberation Serif",serif;"><i>f</i><span style="font-size:4.5px">x</span></div>
<div style="position:absolute;left:129px;top:73.5px;width:541px;height:11.5px;background:#fff;border:1px solid #c9cdd3;"></div>
<div style="position:absolute;left:670px;top:73.5px;width:10px;height:11.5px;background:linear-gradient(#f4f5f7,#e2e5ea);border:1px solid #c2c7ce;"></div>
<svg style="position:absolute;left:672.5px;top:77.5px" width="5" height="3.5" viewBox="0 0 5 3.5"><path d="M0.5 0.5 L2.5 2.8 L4.5 0.5" stroke="#333" stroke-width="0.9" fill="none"/></svg>
<div style="position:absolute;left:0px;top:87px;width:669px;height:6.8px;background:linear-gradient(#f3f5f8,#e3e7ec);border-bottom:1px solid #c5cad1;"></div>
<div style="position:absolute;left:0px;top:87px;width:14px;height:6.8px;background:#e9ecf0;border-right:1px solid #c5cad1;border-bottom:1px solid #c5cad1;"></div>
<div style="position:absolute;left:20.8px;top:87.5px;width:1px;height:6px;background:#c9cfd6;"></div>
<div style="position:absolute;left:-82.35px;top:88.14px;width:200px;text-align:center;font-size:5.60px;line-height:6.72px;color:#4a5566;font-weight:normal;white-space:nowrap;">A</div>
<div style="position:absolute;left:76.0px;top:87.5px;width:1px;height:6px;background:#c9cfd6;"></div>
<div style="position:absolute;left:-51.10px;top:88.14px;width:200px;text-align:center;font-size:5.60px;line-height:6.72px;color:#4a5566;font-weight:normal;white-space:nowrap;">B</div>
<div style="position:absolute;left:126.5px;top:87.5px;width:1px;height:6px;background:#c9cfd6;"></div>
<div style="position:absolute;left:1.75px;top:88.14px;width:200px;text-align:center;font-size:5.60px;line-height:6.72px;color:#4a5566;font-weight:normal;white-space:nowrap;">C</div>
<div style="position:absolute;left:164.8px;top:87.5px;width:1px;height:6px;background:#c9cfd6;"></div>
<div style="position:absolute;left:46.15px;top:88.14px;width:200px;text-align:center;font-size:5.60px;line-height:6.72px;color:#4a5566;font-weight:normal;white-space:nowrap;">D</div>
<div style="position:absolute;left:165.3px;top:87px;width:38.29999999999998px;height:6.8px;background:linear-gradient(#fbe3a0,#f6c95c);border-bottom:1px solid #e0a830;"></div>
<div style="position:absolute;left:203.1px;top:87.5px;width:1px;height:6px;background:#c9cfd6;"></div>
<div style="position:absolute;left:84.45px;top:88.14px;width:200px;text-align:center;font-size:5.60px;line-height:6.72px;color:#6a5030;font-weight:normal;white-space:nowrap;">E</div>
<div style="position:absolute;left:325.1px;top:87.5px;width:1px;height:6px;background:#c9cfd6;"></div>
<div style="position:absolute;left:164.60px;top:88.14px;width:200px;text-align:center;font-size:5.60px;line-height:6.72px;color:#4a5566;font-weight:normal;white-space:nowrap;">F</div>
<div style="position:absolute;left:332.7px;top:87.5px;width:1px;height:6px;background:#c9cfd6;"></div>
<div style="position:absolute;left:229.40px;top:88.14px;width:200px;text-align:center;font-size:5.60px;line-height:6.72px;color:#4a5566;font-weight:normal;white-space:nowrap;">G</div>
<div style="position:absolute;left:360.22499999999997px;top:87.5px;width:1px;height:6px;background:#c9cfd6;"></div>
<div style="position:absolute;left:246.96px;top:88.14px;width:200px;text-align:center;font-size:5.60px;line-height:6.72px;color:#4a5566;font-weight:normal;white-space:nowrap;">H</div>
<div style="position:absolute;left:387.74999999999994px;top:87.5px;width:1px;height:6px;background:#c9cfd6;"></div>
<div style="position:absolute;left:274.49px;top:88.14px;width:200px;text-align:center;font-size:5.60px;line-height:6.72px;color:#4a5566;font-weight:normal;white-space:nowrap;">I</div>
<div style="position:absolute;left:415.2749999999999px;top:87.5px;width:1px;height:6px;background:#c9cfd6;"></div>
<div style="position:absolute;left:302.01px;top:88.14px;width:200px;text-align:center;font-size:5.60px;line-height:6.72px;color:#4a5566;font-weight:normal;white-space:nowrap;">J</div>
<div style="position:absolute;left:442.7999999999999px;top:87.5px;width:1px;height:6px;background:#c9cfd6;"></div>
<div style="position:absolute;left:329.54px;top:88.14px;width:200px;text-align:center;font-size:5.60px;line-height:6.72px;color:#4a5566;font-weight:normal;white-space:nowrap;">K</div>
<div style="position:absolute;left:470.3249999999999px;top:87.5px;width:1px;height:6px;background:#c9cfd6;"></div>
<div style="position:absolute;left:357.06px;top:88.14px;width:200px;text-align:center;font-size:5.60px;line-height:6.72px;color:#4a5566;font-weight:normal;white-space:nowrap;">L</div>
<div style="position:absolute;left:497.84999999999985px;top:87.5px;width:1px;height:6px;background:#c9cfd6;"></div>
<div style="position:absolute;left:384.59px;top:88.14px;width:200px;text-align:center;font-size:5.60px;line-height:6.72px;color:#4a5566;font-weight:normal;white-space:nowrap;">M</div>
<div style="position:absolute;left:525.3749999999999px;top:87.5px;width:1px;height:6px;background:#c9cfd6;"></div>
<div style="position:absolute;left:412.11px;top:88.14px;width:200px;text-align:center;font-size:5.60px;line-height:6.72px;color:#4a5566;font-weight:normal;white-space:nowrap;">N</div>
<div style="position:absolute;left:552.8999999999999px;top:87.5px;width:1px;height:6px;background:#c9cfd6;"></div>
<div style="position:absolute;left:439.64px;top:88.14px;width:200px;text-align:center;font-size:5.60px;line-height:6.72px;color:#4a5566;font-weight:normal;white-space:nowrap;">O</div>
<div style="position:absolute;left:580.4249999999998px;top:87.5px;width:1px;height:6px;background:#c9cfd6;"></div>
<div style="position:absolute;left:467.16px;top:88.14px;width:200px;text-align:center;font-size:5.60px;line-height:6.72px;color:#4a5566;font-weight:normal;white-space:nowrap;">P</div>
<div style="position:absolute;left:607.9499999999998px;top:87.5px;width:1px;height:6px;background:#c9cfd6;"></div>
<div style="position:absolute;left:494.69px;top:88.14px;width:200px;text-align:center;font-size:5.60px;line-height:6.72px;color:#4a5566;font-weight:normal;white-space:nowrap;">Q</div>
<div style="position:absolute;left:635.4749999999998px;top:87.5px;width:1px;height:6px;background:#c9cfd6;"></div>
<div style="position:absolute;left:522.21px;top:88.14px;width:200px;text-align:center;font-size:5.60px;line-height:6.72px;color:#4a5566;font-weight:normal;white-space:nowrap;">R</div>
<div style="position:absolute;left:662.9999999999998px;top:87.5px;width:1px;height:6px;background:#c9cfd6;"></div>
<div style="position:absolute;left:549.74px;top:88.14px;width:200px;text-align:center;font-size:5.60px;line-height:6.72px;color:#4a5566;font-weight:normal;white-space:nowrap;">S</div>
<div style="position:absolute;left:690.4999999999998px;top:87.5px;width:1px;height:6px;background:#c9cfd6;"></div>
<div style="position:absolute;left:577.25px;top:88.14px;width:200px;text-align:center;font-size:5.60px;line-height:6.72px;color:#4a5566;font-weight:normal;white-space:nowrap;">T</div>
<div style="position:absolute;left:0px;top:93.5px;width:14px;height:410px;background:linear-gradient(90deg,#eef1f5,#e2e6eb);border-right:1px solid #c5cad1;"></div>
<div style="position:absolute;left:0px;top:109.0px;width:14px;height:1px;background:#c9cfd6;"></div>
<div style="position:absolute;left:-93.00px;top:103.64px;width:200px;text-align:center;font-size:5.60px;line-height:6.72px;color:#4a5566;font-weight:normal;white-space:nowrap;">1</div>
<div style="position:absolute;left:0px;top:119.0px;width:14px;height:1px;background:#c9cfd6;"></div>
<div style="position:absolute;left:-93.00px;top:113.64px;width:200px;text-align:center;font-size:5.60px;line-height:6.72px;color:#4a5566;font-weight:normal;white-space:nowrap;">2</div>
<div style="position:absolute;left:0px;top:129.5px;width:14px;height:1px;background:#c9cfd6;"></div>
<div style="position:absolute;left:-93.00px;top:124.14px;width:200px;text-align:center;font-size:5.60px;line-height:6.72px;color:#4a5566;font-weight:normal;white-space:nowrap;">3</div>
<div style="position:absolute;left:0px;top:144.5px;width:14px;height:1px;background:#c9cfd6;"></div>
<div style="position:absolute;left:-93.00px;top:139.14px;width:200px;text-align:center;font-size:5.60px;line-height:6.72px;color:#4a5566;font-weight:normal;white-space:nowrap;">4</div>
<div style="position:absolute;left:0px;top:153.87px;width:14px;height:1px;background:#c9cfd6;"></div>
<div style="position:absolute;left:-93.00px;top:148.51px;width:200px;text-align:center;font-size:5.60px;line-height:6.72px;color:#4a5566;font-weight:normal;white-space:nowrap;">5</div>
<div style="position:absolute;left:0px;top:161.27px;width:14px;height:1px;background:#c9cfd6;"></div>
<div style="position:absolute;left:-93.00px;top:155.91px;width:200px;text-align:center;font-size:5.60px;line-height:6.72px;color:#4a5566;font-weight:normal;white-space:nowrap;">6</div>
<div style="position:absolute;left:0px;top:168.67000000000002px;width:14px;height:1px;background:#c9cfd6;"></div>
<div style="position:absolute;left:-93.00px;top:163.31px;width:200px;text-align:center;font-size:5.60px;line-height:6.72px;color:#4a5566;font-weight:normal;white-space:nowrap;">7</div>
<div style="position:absolute;left:0px;top:176.07000000000002px;width:14px;height:1px;background:#c9cfd6;"></div>
<div style="position:absolute;left:-93.00px;top:170.71px;width:200px;text-align:center;font-size:5.60px;line-height:6.72px;color:#4a5566;font-weight:normal;white-space:nowrap;">8</div>
<div style="position:absolute;left:0px;top:183.47000000000003px;width:14px;height:1px;background:#c9cfd6;"></div>
<div style="position:absolute;left:-93.00px;top:178.11px;width:200px;text-align:center;font-size:5.60px;line-height:6.72px;color:#4a5566;font-weight:normal;white-space:nowrap;">9</div>
<div style="position:absolute;left:0px;top:190.87000000000003px;width:14px;height:1px;background:#c9cfd6;"></div>
<div style="position:absolute;left:-93.00px;top:185.51px;width:200px;text-align:center;font-size:5.60px;line-height:6.72px;color:#4a5566;font-weight:normal;white-space:nowrap;">10</div>
<div style="position:absolute;left:0px;top:198.27000000000004px;width:14px;height:1px;background:#c9cfd6;"></div>
<div style="position:absolute;left:-93.00px;top:192.91px;width:200px;text-align:center;font-size:5.60px;line-height:6.72px;color:#4a5566;font-weight:normal;white-space:nowrap;">11</div>
<div style="position:absolute;left:0px;top:205.67000000000004px;width:14px;height:1px;background:#c9cfd6;"></div>
<div style="position:absolute;left:-93.00px;top:200.31px;width:200px;text-align:center;font-size:5.60px;line-height:6.72px;color:#4a5566;font-weight:normal;white-space:nowrap;">12</div>
<div style="position:absolute;left:0px;top:215.04000000000005px;width:14px;height:1px;background:#c9cfd6;"></div>
<div style="position:absolute;left:-93.00px;top:209.68px;width:200px;text-align:center;font-size:5.60px;line-height:6.72px;color:#4a5566;font-weight:normal;white-space:nowrap;">13</div>
<div style="position:absolute;left:0px;top:222.44000000000005px;width:14px;height:1px;background:#c9cfd6;"></div>
<div style="position:absolute;left:-93.00px;top:217.08px;width:200px;text-align:center;font-size:5.60px;line-height:6.72px;color:#4a5566;font-weight:normal;white-space:nowrap;">14</div>
<div style="position:absolute;left:0px;top:229.84000000000006px;width:14px;height:1px;background:#c9cfd6;"></div>
<div style="position:absolute;left:-93.00px;top:224.48px;width:200px;text-align:center;font-size:5.60px;line-height:6.72px;color:#4a5566;font-weight:normal;white-space:nowrap;">15</div>
<div style="position:absolute;left:0px;top:237.24000000000007px;width:14px;height:1px;background:#c9cfd6;"></div>
<div style="position:absolute;left:-93.00px;top:231.88px;width:200px;text-align:center;font-size:5.60px;line-height:6.72px;color:#4a5566;font-weight:normal;white-space:nowrap;">16</div>
<div style="position:absolute;left:0px;top:244.64000000000007px;width:14px;height:1px;background:#c9cfd6;"></div>
<div style="position:absolute;left:-93.00px;top:239.28px;width:200px;text-align:center;font-size:5.60px;line-height:6.72px;color:#4a5566;font-weight:normal;white-space:nowrap;">17</div>
<div style="position:absolute;left:0px;top:254.01000000000008px;width:14px;height:1px;background:#c9cfd6;"></div>
<div style="position:absolute;left:-93.00px;top:248.65px;width:200px;text-align:center;font-size:5.60px;line-height:6.72px;color:#4a5566;font-weight:normal;white-space:nowrap;">18</div>
<div style="position:absolute;left:0px;top:261.4100000000001px;width:14px;height:1px;background:#c9cfd6;"></div>
<div style="position:absolute;left:-93.00px;top:256.05px;width:200px;text-align:center;font-size:5.60px;line-height:6.72px;color:#4a5566;font-weight:normal;white-space:nowrap;">19</div>
<div style="position:absolute;left:0px;top:268.81000000000006px;width:14px;height:1px;background:#c9cfd6;"></div>
<div style="position:absolute;left:-93.00px;top:263.45px;width:200px;text-align:center;font-size:5.60px;line-height:6.72px;color:#4a5566;font-weight:normal;white-space:nowrap;">20</div>
<div style="position:absolute;left:0px;top:276.21000000000004px;width:14px;height:1px;background:#c9cfd6;"></div>
<div style="position:absolute;left:-93.00px;top:270.85px;width:200px;text-align:center;font-size:5.60px;line-height:6.72px;color:#4a5566;font-weight:normal;white-space:nowrap;">21</div>
<div style="position:absolute;left:0px;top:283.61px;width:14px;height:1px;background:#c9cfd6;"></div>
<div style="position:absolute;left:-93.00px;top:278.25px;width:200px;text-align:center;font-size:5.60px;line-height:6.72px;color:#4a5566;font-weight:normal;white-space:nowrap;">22</div>
<div style="position:absolute;left:0px;top:292.98px;width:14px;height:1px;background:#c9cfd6;"></div>
<div style="position:absolute;left:-93.00px;top:287.62px;width:200px;text-align:center;font-size:5.60px;line-height:6.72px;color:#4a5566;font-weight:normal;white-space:nowrap;">23</div>
<div style="position:absolute;left:0px;top:300.38px;width:14px;height:1px;background:#c9cfd6;"></div>
<div style="position:absolute;left:-93.00px;top:295.02px;width:200px;text-align:center;font-size:5.60px;line-height:6.72px;color:#4a5566;font-weight:normal;white-space:nowrap;">24</div>
<div style="position:absolute;left:0px;top:307.78px;width:14px;height:1px;background:#c9cfd6;"></div>
<div style="position:absolute;left:-93.00px;top:302.42px;width:200px;text-align:center;font-size:5.60px;line-height:6.72px;color:#4a5566;font-weight:normal;white-space:nowrap;">25</div>
<div style="position:absolute;left:0px;top:315.17999999999995px;width:14px;height:1px;background:#c9cfd6;"></div>
<div style="position:absolute;left:-93.00px;top:309.82px;width:200px;text-align:center;font-size:5.60px;line-height:6.72px;color:#4a5566;font-weight:normal;white-space:nowrap;">26</div>
<div style="position:absolute;left:0px;top:322.5799999999999px;width:14px;height:1px;background:#c9cfd6;"></div>
<div style="position:absolute;left:-93.00px;top:317.22px;width:200px;text-align:center;font-size:5.60px;line-height:6.72px;color:#4a5566;font-weight:normal;white-space:nowrap;">27</div>
<div style="position:absolute;left:0px;top:331.94999999999993px;width:14px;height:1px;background:#c9cfd6;"></div>
<div style="position:absolute;left:-93.00px;top:326.59px;width:200px;text-align:center;font-size:5.60px;line-height:6.72px;color:#4a5566;font-weight:normal;white-space:nowrap;">28</div>
<div style="position:absolute;left:0px;top:339.3499999999999px;width:14px;height:1px;background:#c9cfd6;"></div>
<div style="position:absolute;left:-93.00px;top:333.99px;width:200px;text-align:center;font-size:5.60px;line-height:6.72px;color:#4a5566;font-weight:normal;white-space:nowrap;">29</div>
<div style="position:absolute;left:0px;top:346.7499999999999px;width:14px;height:1px;background:#c9cfd6;"></div>
<div style="position:absolute;left:-93.00px;top:341.39px;width:200px;text-align:center;font-size:5.60px;line-height:6.72px;color:#4a5566;font-weight:normal;white-space:nowrap;">30</div>
<div style="position:absolute;left:0px;top:354.14999999999986px;width:14px;height:1px;background:#c9cfd6;"></div>
<div style="position:absolute;left:-93.00px;top:348.79px;width:200px;text-align:center;font-size:5.60px;line-height:6.72px;color:#4a5566;font-weight:normal;white-space:nowrap;">31</div>
<div style="position:absolute;left:0px;top:361.54999999999984px;width:14px;height:1px;background:#c9cfd6;"></div>
<div style="position:absolute;left:-93.00px;top:356.19px;width:200px;text-align:center;font-size:5.60px;line-height:6.72px;color:#4a5566;font-weight:normal;white-space:nowrap;">32</div>
<div style="position:absolute;left:0px;top:368.9499999999998px;width:14px;height:1px;background:#c9cfd6;"></div>
<div style="position:absolute;left:-93.00px;top:363.59px;width:200px;text-align:center;font-size:5.60px;line-height:6.72px;color:#4a5566;font-weight:normal;white-space:nowrap;">33</div>
<div style="position:absolute;left:0px;top:376.3499999999998px;width:14px;height:1px;background:#c9cfd6;"></div>
<div style="position:absolute;left:-93.00px;top:370.99px;width:200px;text-align:center;font-size:5.60px;line-height:6.72px;color:#4a5566;font-weight:normal;white-space:nowrap;">34</div>
<div style="position:absolute;left:0px;top:385.7199999999998px;width:14px;height:1px;background:#c9cfd6;"></div>
<div style="position:absolute;left:-93.00px;top:380.36px;width:200px;text-align:center;font-size:5.60px;line-height:6.72px;color:#4a5566;font-weight:normal;white-space:nowrap;">35</div>
<div style="position:absolute;left:0px;top:393.1199999999998px;width:14px;height:1px;background:#c9cfd6;"></div>
<div style="position:absolute;left:-93.00px;top:387.76px;width:200px;text-align:center;font-size:5.60px;line-height:6.72px;color:#4a5566;font-weight:normal;white-space:nowrap;">36</div>
<div style="position:absolute;left:0px;top:400.51999999999975px;width:14px;height:1px;background:#c9cfd6;"></div>
<div style="position:absolute;left:-93.00px;top:395.16px;width:200px;text-align:center;font-size:5.60px;line-height:6.72px;color:#4a5566;font-weight:normal;white-space:nowrap;">37</div>
<div style="position:absolute;left:0px;top:407.91999999999973px;width:14px;height:1px;background:#c9cfd6;"></div>
<div style="position:absolute;left:-93.00px;top:402.56px;width:200px;text-align:center;font-size:5.60px;line-height:6.72px;color:#4a5566;font-weight:normal;white-space:nowrap;">38</div>
<div style="position:absolute;left:0px;top:415.3199999999997px;width:14px;height:1px;background:#c9cfd6;"></div>
<div style="position:absolute;left:-93.00px;top:409.96px;width:200px;text-align:center;font-size:5.60px;line-height:6.72px;color:#4a5566;font-weight:normal;white-space:nowrap;">39</div>
<div style="position:absolute;left:0px;top:422.7199999999997px;width:14px;height:1px;background:#c9cfd6;"></div>
<div style="position:absolute;left:-93.00px;top:417.36px;width:200px;text-align:center;font-size:5.60px;line-height:6.72px;color:#4a5566;font-weight:normal;white-space:nowrap;">40</div>
<div style="position:absolute;left:0px;top:430.11999999999966px;width:14px;height:1px;background:#c9cfd6;"></div>
<div style="position:absolute;left:-93.00px;top:424.76px;width:200px;text-align:center;font-size:5.60px;line-height:6.72px;color:#4a5566;font-weight:normal;white-space:nowrap;">41</div>
<div style="position:absolute;left:0px;top:437.51999999999964px;width:14px;height:1px;background:#c9cfd6;"></div>
<div style="position:absolute;left:-93.00px;top:432.16px;width:200px;text-align:center;font-size:5.60px;line-height:6.72px;color:#4a5566;font-weight:normal;white-space:nowrap;">42</div>
<div style="position:absolute;left:0px;top:444.9199999999996px;width:14px;height:1px;background:#c9cfd6;"></div>
<div style="position:absolute;left:-93.00px;top:439.56px;width:200px;text-align:center;font-size:5.60px;line-height:6.72px;color:#4a5566;font-weight:normal;white-space:nowrap;">43</div>
<div style="position:absolute;left:0px;top:454.2899999999996px;width:14px;height:1px;background:#c9cfd6;"></div>
<div style="position:absolute;left:-93.00px;top:448.93px;width:200px;text-align:center;font-size:5.60px;line-height:6.72px;color:#4a5566;font-weight:normal;white-space:nowrap;">44</div>
<div style="position:absolute;left:0px;top:461.6899999999996px;width:14px;height:1px;background:#c9cfd6;"></div>
<div style="position:absolute;left:-93.00px;top:456.33px;width:200px;text-align:center;font-size:5.60px;line-height:6.72px;color:#4a5566;font-weight:normal;white-space:nowrap;">45</div>
<div style="position:absolute;left:0px;top:469.0899999999996px;width:14px;height:1px;background:#c9cfd6;"></div>
<div style="position:absolute;left:-93.00px;top:463.73px;width:200px;text-align:center;font-size:5.60px;line-height:6.72px;color:#4a5566;font-weight:normal;white-space:nowrap;">46</div>
<div style="position:absolute;left:0px;top:476.48999999999955px;width:14px;height:1px;background:#c9cfd6;"></div>
<div style="position:absolute;left:-93.00px;top:471.13px;width:200px;text-align:center;font-size:5.60px;line-height:6.72px;color:#4a5566;font-weight:normal;white-space:nowrap;">47</div>
<div style="position:absolute;left:0px;top:483.88999999999953px;width:14px;height:1px;background:#c9cfd6;"></div>
<div style="position:absolute;left:-93.00px;top:478.53px;width:200px;text-align:center;font-size:5.60px;line-height:6.72px;color:#4a5566;font-weight:normal;white-space:nowrap;">48</div>
<div style="position:absolute;left:0px;top:491.2899999999995px;width:14px;height:1px;background:#c9cfd6;"></div>
<div style="position:absolute;left:-93.00px;top:485.93px;width:200px;text-align:center;font-size:5.60px;line-height:6.72px;color:#4a5566;font-weight:normal;white-space:nowrap;">49</div>
<div style="position:absolute;left:0px;top:498.6899999999995px;width:14px;height:1px;background:#c9cfd6;"></div>
<div style="position:absolute;left:-93.00px;top:493.33px;width:200px;text-align:center;font-size:5.60px;line-height:6.72px;color:#4a5566;font-weight:normal;white-space:nowrap;">50</div>
<div style="position:absolute;left:0px;top:506.08999999999946px;width:14px;height:1px;background:#c9cfd6;"></div>
<div style="position:absolute;left:-93.00px;top:500.73px;width:200px;text-align:center;font-size:5.60px;line-height:6.72px;color:#4a5566;font-weight:normal;white-space:nowrap;">51</div>
<div style="position:absolute;left:23.50px;top:96.80px;font-size:10.00px;line-height:12.00px;color:#5a5a5a;font-weight:normal;white-space:nowrap;transform:scaleX(0.835);transform-origin:0 0;">EVENT BUDGET</div>
<div style="position:absolute;left:-124.50px;top:113.28px;width:200px;text-align:right;font-size:3.70px;line-height:4.44px;color:#555;font-weight:normal;white-space:nowrap;letter-spacing:0.12px;">Projected Subtotal to Date:</div>
<div style="position:absolute;left:-124.50px;top:123.58px;width:200px;text-align:right;font-size:3.70px;line-height:4.44px;color:#555;font-weight:normal;white-space:nowrap;letter-spacing:0.12px;">Actual Subtotal to Date:</div>
<div style="position:absolute;left:84.30px;top:112.58px;font-size:5.20px;line-height:6.24px;color:#111;font-weight:bold;white-space:nowrap;">$</div>
<div style="position:absolute;left:84.30px;top:122.78px;font-size:5.20px;line-height:6.24px;color:#111;font-weight:bold;white-space:nowrap;">$</div>
<div style="position:absolute;left:-76.50px;top:111.84px;width:200px;text-align:right;font-size:6.10px;line-height:7.32px;color:#222;font-weight:normal;white-space:nowrap;letter-spacing:0.42px;">9,500.00</div>
<div style="position:absolute;left:-76.50px;top:122.14px;width:200px;text-align:right;font-size:6.10px;line-height:7.32px;color:#222;font-weight:normal;white-space:nowrap;letter-spacing:0.42px;">7,830.00</div>
<div style="position:absolute;left:21.3px;top:130.0px;width:105.7px;height:15px;background:#808080;"></div>
<div style="position:absolute;left:-25.80px;top:135.22px;width:200px;text-align:center;font-size:5.80px;line-height:6.96px;color:#fff;font-weight:bold;white-space:nowrap;">CATEGORY</div>
<div style="position:absolute;left:127px;top:130.0px;width:38.3px;height:15px;background:#92d050;"></div>
<div style="position:absolute;left:127px;top:130.0px;width:38.3px;height:15px;overflow:hidden;"><div style="position:absolute;left:0;top:1.0px;width:38.3px;text-align:center;color:#fff;font-weight:bold;font-size:5.6px;line-height:5.4px;">PROJECTE<br>D<br>SUBTOTAL</div></div>
<div style="position:absolute;left:165.3px;top:130.0px;width:38.3px;height:15px;background:#00b050;"></div>
<div style="position:absolute;left:165.3px;top:133.0px;width:38.3px;text-align:center;color:#fff;font-weight:bold;font-size:5.6px;line-height:5.8px;">ACTUAL<br>SUBTOTAL</div>
<div style="position:absolute;left:203.6px;top:130.0px;width:122px;height:15px;background:#a6a6a6;"></div>
<div style="position:absolute;left:164.60px;top:134.80px;width:200px;text-align:center;font-size:6.00px;line-height:7.20px;color:#fff;font-weight:bold;white-space:nowrap;">COMMENTS</div>
<div style="position:absolute;left:21.3px;top:145.0px;width:304.3px;height:9.37px;background:#d9d9d9;"></div>
<div style="position:absolute;left:127px;top:145.0px;width:38.3px;height:9.37px;background:#d8efb4;"></div>
<div style="position:absolute;left:165.3px;top:145.0px;width:38.3px;height:9.37px;background:#93d7a3;"></div>
<div style="position:absolute;left:27.00px;top:148.22px;font-size:5.60px;line-height:6.72px;color:#222;font-weight:bold;white-space:nowrap;">Venue</div>
<div style="position:absolute;left:-78.50px;top:148.62px;width:200px;text-align:right;font-size:3.60px;line-height:4.32px;color:#666;font-weight:bold;white-space:nowrap;letter-spacing:0.55px;">SUBTOTALS</div>
<div style="position:absolute;left:132.50px;top:148.28px;font-size:5.00px;line-height:6.00px;color:#111;font-weight:bold;white-space:nowrap;">$</div>
<div style="position:absolute;left:-39.80px;top:148.16px;width:200px;text-align:right;font-size:5.20px;line-height:6.24px;color:#1a1a1a;font-weight:bold;white-space:nowrap;">1,500.00</div>
<div style="position:absolute;left:170.50px;top:148.28px;font-size:5.00px;line-height:6.00px;color:#111;font-weight:bold;white-space:nowrap;">$</div>
<div style="position:absolute;left:-1.80px;top:148.16px;width:200px;text-align:right;font-size:5.20px;line-height:6.24px;color:#1a1a1a;font-weight:bold;white-space:nowrap;">1,200.00</div>
<div style="position:absolute;left:127px;top:154.37px;width:38.3px;height:7.4px;background:#f3f9e4;"></div>
<div style="position:absolute;left:165.3px;top:154.37px;width:38.3px;height:7.4px;background:#d2ecd6;"></div>
<div style="position:absolute;left:27.00px;top:156.70px;font-size:4.95px;line-height:5.94px;color:#383838;font-weight:normal;white-space:nowrap;">Location Rental</div>
<div style="position:absolute;left:130.30px;top:156.39px;font-size:4.80px;line-height:5.76px;color:#333;font-weight:normal;white-space:nowrap;">$</div>
<div style="position:absolute;left:-37.20px;top:156.07px;width:200px;text-align:right;font-size:5.00px;line-height:6.00px;color:#4a4a4a;font-weight:normal;white-space:nowrap;letter-spacing:-0.25px;">1,500.00</div>
<div style="position:absolute;left:168.50px;top:156.39px;font-size:4.80px;line-height:5.76px;color:#333;font-weight:normal;white-space:nowrap;">$</div>
<div style="position:absolute;left:1.30px;top:156.07px;width:200px;text-align:right;font-size:5.00px;line-height:6.00px;color:#4a4a4a;font-weight:normal;white-space:nowrap;letter-spacing:-0.25px;">1,200.00</div>
<div style="position:absolute;left:127px;top:161.77px;width:38.3px;height:7.4px;background:#f3f9e4;"></div>
<div style="position:absolute;left:165.3px;top:161.77px;width:38.3px;height:7.4px;background:#d2ecd6;"></div>
<div style="position:absolute;left:27.00px;top:164.10px;font-size:4.95px;line-height:5.94px;color:#383838;font-weight:normal;white-space:nowrap;">Event Staff</div>
<div style="position:absolute;left:127px;top:169.17000000000002px;width:38.3px;height:7.4px;background:#f3f9e4;"></div>
<div style="position:absolute;left:165.3px;top:169.17000000000002px;width:38.3px;height:7.4px;background:#d2ecd6;"></div>
<div style="position:absolute;left:27.00px;top:171.50px;font-size:4.95px;line-height:5.94px;color:#383838;font-weight:normal;white-space:nowrap;">Equipment Rental</div>
<div style="position:absolute;left:127px;top:176.57000000000002px;width:38.3px;height:7.4px;background:#f3f9e4;"></div>
<div style="position:absolute;left:165.3px;top:176.57000000000002px;width:38.3px;height:7.4px;background:#d2ecd6;"></div>
<div style="position:absolute;left:27.00px;top:178.90px;font-size:4.95px;line-height:5.94px;color:#383838;font-weight:normal;white-space:nowrap;">Additional Tables / Chairs</div>
<div style="position:absolute;left:127px;top:183.97000000000003px;width:38.3px;height:7.4px;background:#f3f9e4;"></div>
<div style="position:absolute;left:165.3px;top:183.97000000000003px;width:38.3px;height:7.4px;background:#d2ecd6;"></div>
<div style="position:absolute;left:27.00px;top:186.30px;font-size:4.95px;line-height:5.94px;color:#383838;font-weight:normal;white-space:nowrap;">A/V</div>
<div style="position:absolute;left:127px;top:191.37000000000003px;width:38.3px;height:7.4px;background:#f3f9e4;"></div>
<div style="position:absolute;left:165.3px;top:191.37000000000003px;width:38.3px;height:7.4px;background:#d2ecd6;"></div>
<div style="position:absolute;left:127px;top:198.77000000000004px;width:38.3px;height:7.4px;background:#f3f9e4;"></div>
<div style="position:absolute;left:165.3px;top:198.77000000000004px;width:38.3px;height:7.4px;background:#d2ecd6;"></div>
<div style="position:absolute;left:21.3px;top:206.17000000000004px;width:304.3px;height:9.37px;background:#d9d9d9;"></div>
<div style="position:absolute;left:127px;top:206.17000000000004px;width:38.3px;height:9.37px;background:#d8efb4;"></div>
<div style="position:absolute;left:165.3px;top:206.17000000000004px;width:38.3px;height:9.37px;background:#93d7a3;"></div>
<div style="position:absolute;left:27.00px;top:209.40px;font-size:5.60px;line-height:6.72px;color:#222;font-weight:bold;white-space:nowrap;">Travel</div>
<div style="position:absolute;left:-78.50px;top:209.80px;width:200px;text-align:right;font-size:3.60px;line-height:4.32px;color:#666;font-weight:bold;white-space:nowrap;letter-spacing:0.55px;">SUBTOTALS</div>
<div style="position:absolute;left:132.50px;top:209.46px;font-size:5.00px;line-height:6.00px;color:#111;font-weight:bold;white-space:nowrap;">$</div>
<div style="position:absolute;left:-39.80px;top:209.34px;width:200px;text-align:right;font-size:5.20px;line-height:6.24px;color:#1a1a1a;font-weight:bold;white-space:nowrap;">1,600.00</div>
<div style="position:absolute;left:170.50px;top:209.46px;font-size:5.00px;line-height:6.00px;color:#111;font-weight:bold;white-space:nowrap;">$</div>
<div style="position:absolute;left:-1.80px;top:209.34px;width:200px;text-align:right;font-size:5.20px;line-height:6.24px;color:#1a1a1a;font-weight:bold;white-space:nowrap;">1,800.00</div>
<div style="position:absolute;left:127px;top:215.54000000000005px;width:38.3px;height:7.4px;background:#f3f9e4;"></div>
<div style="position:absolute;left:165.3px;top:215.54000000000005px;width:38.3px;height:7.4px;background:#d2ecd6;"></div>
<div style="position:absolute;left:27.00px;top:217.87px;font-size:4.95px;line-height:5.94px;color:#383838;font-weight:normal;white-space:nowrap;">Flight / Driving</div>
<div style="position:absolute;left:130.30px;top:217.56px;font-size:4.80px;line-height:5.76px;color:#333;font-weight:normal;white-space:nowrap;">$</div>
<div style="position:absolute;left:-37.20px;top:217.24px;width:200px;text-align:right;font-size:5.00px;line-height:6.00px;color:#4a4a4a;font-weight:normal;white-space:nowrap;letter-spacing:-0.25px;">1,600.00</div>
<div style="position:absolute;left:168.50px;top:217.56px;font-size:4.80px;line-height:5.76px;color:#333;font-weight:normal;white-space:nowrap;">$</div>
<div style="position:absolute;left:1.30px;top:217.24px;width:200px;text-align:right;font-size:5.00px;line-height:6.00px;color:#4a4a4a;font-weight:normal;white-space:nowrap;letter-spacing:-0.25px;">1,800.00</div>
<div style="position:absolute;left:127px;top:222.94000000000005px;width:38.3px;height:7.4px;background:#f3f9e4;"></div>
<div style="position:absolute;left:165.3px;top:222.94000000000005px;width:38.3px;height:7.4px;background:#d2ecd6;"></div>
<div style="position:absolute;left:27.00px;top:225.27px;font-size:4.95px;line-height:5.94px;color:#383838;font-weight:normal;white-space:nowrap;">Lodging</div>
<div style="position:absolute;left:127px;top:230.34000000000006px;width:38.3px;height:7.4px;background:#f3f9e4;"></div>
<div style="position:absolute;left:165.3px;top:230.34000000000006px;width:38.3px;height:7.4px;background:#d2ecd6;"></div>
<div style="position:absolute;left:27.00px;top:232.67px;font-size:4.95px;line-height:5.94px;color:#383838;font-weight:normal;white-space:nowrap;">Per Diem</div>
<div style="position:absolute;left:127px;top:237.74000000000007px;width:38.3px;height:7.4px;background:#f3f9e4;"></div>
<div style="position:absolute;left:165.3px;top:237.74000000000007px;width:38.3px;height:7.4px;background:#d2ecd6;"></div>
<div style="position:absolute;left:21.3px;top:245.14000000000007px;width:304.3px;height:9.37px;background:#d9d9d9;"></div>
<div style="position:absolute;left:127px;top:245.14000000000007px;width:38.3px;height:9.37px;background:#d8efb4;"></div>
<div style="position:absolute;left:165.3px;top:245.14000000000007px;width:38.3px;height:9.37px;background:#93d7a3;"></div>
<div style="position:absolute;left:27.00px;top:248.37px;font-size:5.60px;line-height:6.72px;color:#222;font-weight:bold;white-space:nowrap;">Public Relations</div>
<div style="position:absolute;left:-78.50px;top:248.77px;width:200px;text-align:right;font-size:3.60px;line-height:4.32px;color:#666;font-weight:bold;white-space:nowrap;letter-spacing:0.55px;">SUBTOTALS</div>
<div style="position:absolute;left:132.50px;top:248.43px;font-size:5.00px;line-height:6.00px;color:#111;font-weight:bold;white-space:nowrap;">$</div>
<div style="position:absolute;left:-39.80px;top:248.31px;width:200px;text-align:right;font-size:5.20px;line-height:6.24px;color:#1a1a1a;font-weight:bold;white-space:nowrap;">1,250.00</div>
<div style="position:absolute;left:170.50px;top:248.43px;font-size:5.00px;line-height:6.00px;color:#111;font-weight:bold;white-space:nowrap;">$</div>
<div style="position:absolute;left:-1.80px;top:248.31px;width:200px;text-align:right;font-size:5.20px;line-height:6.24px;color:#1a1a1a;font-weight:bold;white-space:nowrap;">950.00</div>
<div style="position:absolute;left:127px;top:254.51000000000008px;width:38.3px;height:7.4px;background:#f3f9e4;"></div>
<div style="position:absolute;left:165.3px;top:254.51000000000008px;width:38.3px;height:7.4px;background:#d2ecd6;"></div>
<div style="position:absolute;left:27.00px;top:256.84px;font-size:4.95px;line-height:5.94px;color:#383838;font-weight:normal;white-space:nowrap;">Announcements</div>
<div style="position:absolute;left:130.30px;top:256.53px;font-size:4.80px;line-height:5.76px;color:#333;font-weight:normal;white-space:nowrap;">$</div>
<div style="position:absolute;left:-37.20px;top:256.21px;width:200px;text-align:right;font-size:5.00px;line-height:6.00px;color:#4a4a4a;font-weight:normal;white-space:nowrap;letter-spacing:-0.25px;">400.00</div>
<div style="position:absolute;left:168.50px;top:256.53px;font-size:4.80px;line-height:5.76px;color:#333;font-weight:normal;white-space:nowrap;">$</div>
<div style="position:absolute;left:1.30px;top:256.21px;width:200px;text-align:right;font-size:5.00px;line-height:6.00px;color:#4a4a4a;font-weight:normal;white-space:nowrap;letter-spacing:-0.25px;">300.00</div>
<div style="position:absolute;left:127px;top:261.9100000000001px;width:38.3px;height:7.4px;background:#f3f9e4;"></div>
<div style="position:absolute;left:165.3px;top:261.9100000000001px;width:38.3px;height:7.4px;background:#d2ecd6;"></div>
<div style="position:absolute;left:27.00px;top:264.24px;font-size:4.95px;line-height:5.94px;color:#383838;font-weight:normal;white-space:nowrap;">Graphics</div>
<div style="position:absolute;left:130.30px;top:263.93px;font-size:4.80px;line-height:5.76px;color:#333;font-weight:normal;white-space:nowrap;">$</div>
<div style="position:absolute;left:-37.20px;top:263.61px;width:200px;text-align:right;font-size:5.00px;line-height:6.00px;color:#4a4a4a;font-weight:normal;white-space:nowrap;letter-spacing:-0.25px;">600.00</div>
<div style="position:absolute;left:168.50px;top:263.93px;font-size:4.80px;line-height:5.76px;color:#333;font-weight:normal;white-space:nowrap;">$</div>
<div style="position:absolute;left:1.30px;top:263.61px;width:200px;text-align:right;font-size:5.00px;line-height:6.00px;color:#4a4a4a;font-weight:normal;white-space:nowrap;letter-spacing:-0.25px;">400.00</div>
<div style="position:absolute;left:127px;top:269.31000000000006px;width:38.3px;height:7.4px;background:#f3f9e4;"></div>
<div style="position:absolute;left:165.3px;top:269.31000000000006px;width:38.3px;height:7.4px;background:#d2ecd6;"></div>
<div style="position:absolute;left:27.00px;top:271.64px;font-size:4.95px;line-height:5.94px;color:#383838;font-weight:normal;white-space:nowrap;">Press Releases</div>
<div style="position:absolute;left:130.30px;top:271.33px;font-size:4.80px;line-height:5.76px;color:#333;font-weight:normal;white-space:nowrap;">$</div>
<div style="position:absolute;left:-37.20px;top:271.01px;width:200px;text-align:right;font-size:5.00px;line-height:6.00px;color:#4a4a4a;font-weight:normal;white-space:nowrap;letter-spacing:-0.25px;">250.00</div>
<div style="position:absolute;left:168.50px;top:271.33px;font-size:4.80px;line-height:5.76px;color:#333;font-weight:normal;white-space:nowrap;">$</div>
<div style="position:absolute;left:1.30px;top:271.01px;width:200px;text-align:right;font-size:5.00px;line-height:6.00px;color:#4a4a4a;font-weight:normal;white-space:nowrap;letter-spacing:-0.25px;">250.00</div>
<div style="position:absolute;left:127px;top:276.71000000000004px;width:38.3px;height:7.4px;background:#f3f9e4;"></div>
<div style="position:absolute;left:165.3px;top:276.71000000000004px;width:38.3px;height:7.4px;background:#d2ecd6;"></div>
<div style="position:absolute;left:21.3px;top:284.11px;width:304.3px;height:9.37px;background:#d9d9d9;"></div>
<div style="position:absolute;left:127px;top:284.11px;width:38.3px;height:9.37px;background:#d8efb4;"></div>
<div style="position:absolute;left:165.3px;top:284.11px;width:38.3px;height:9.37px;background:#93d7a3;"></div>
<div style="position:absolute;left:27.00px;top:287.33px;font-size:5.60px;line-height:6.72px;color:#222;font-weight:bold;white-space:nowrap;">Décor</div>
<div style="position:absolute;left:-78.50px;top:287.73px;width:200px;text-align:right;font-size:3.60px;line-height:4.32px;color:#666;font-weight:bold;white-space:nowrap;letter-spacing:0.55px;">SUBTOTALS</div>
<div style="position:absolute;left:132.50px;top:287.39px;font-size:5.00px;line-height:6.00px;color:#111;font-weight:bold;white-space:nowrap;">$</div>
<div style="position:absolute;left:-39.80px;top:287.27px;width:200px;text-align:right;font-size:5.20px;line-height:6.24px;color:#1a1a1a;font-weight:bold;white-space:nowrap;">300.00</div>
<div style="position:absolute;left:170.50px;top:287.39px;font-size:5.00px;line-height:6.00px;color:#111;font-weight:bold;white-space:nowrap;">$</div>
<div style="position:absolute;left:-1.80px;top:287.27px;width:200px;text-align:right;font-size:5.20px;line-height:6.24px;color:#1a1a1a;font-weight:bold;white-space:nowrap;">200.00</div>
<div style="position:absolute;left:127px;top:293.48px;width:38.3px;height:7.4px;background:#f3f9e4;"></div>
<div style="position:absolute;left:165.3px;top:293.48px;width:38.3px;height:7.4px;background:#d2ecd6;"></div>
<div style="position:absolute;left:27.00px;top:295.81px;font-size:4.95px;line-height:5.94px;color:#383838;font-weight:normal;white-space:nowrap;">Linens</div>
<div style="position:absolute;left:130.30px;top:295.50px;font-size:4.80px;line-height:5.76px;color:#333;font-weight:normal;white-space:nowrap;">$</div>
<div style="position:absolute;left:-37.20px;top:295.18px;width:200px;text-align:right;font-size:5.00px;line-height:6.00px;color:#4a4a4a;font-weight:normal;white-space:nowrap;letter-spacing:-0.25px;">300.00</div>
<div style="position:absolute;left:168.50px;top:295.50px;font-size:4.80px;line-height:5.76px;color:#333;font-weight:normal;white-space:nowrap;">$</div>
<div style="position:absolute;left:1.30px;top:295.18px;width:200px;text-align:right;font-size:5.00px;line-height:6.00px;color:#4a4a4a;font-weight:normal;white-space:nowrap;letter-spacing:-0.25px;">200.00</div>
<div style="position:absolute;left:127px;top:300.88px;width:38.3px;height:7.4px;background:#f3f9e4;"></div>
<div style="position:absolute;left:165.3px;top:300.88px;width:38.3px;height:7.4px;background:#d2ecd6;"></div>
<div style="position:absolute;left:27.00px;top:303.21px;font-size:4.95px;line-height:5.94px;color:#383838;font-weight:normal;white-space:nowrap;">Lighting</div>
<div style="position:absolute;left:127px;top:308.28px;width:38.3px;height:7.4px;background:#f3f9e4;"></div>
<div style="position:absolute;left:165.3px;top:308.28px;width:38.3px;height:7.4px;background:#d2ecd6;"></div>
<div style="position:absolute;left:27.00px;top:310.61px;font-size:4.95px;line-height:5.94px;color:#383838;font-weight:normal;white-space:nowrap;">Additional Signage</div>
<div style="position:absolute;left:127px;top:315.67999999999995px;width:38.3px;height:7.4px;background:#f3f9e4;"></div>
<div style="position:absolute;left:165.3px;top:315.67999999999995px;width:38.3px;height:7.4px;background:#d2ecd6;"></div>
<div style="position:absolute;left:21.3px;top:323.0799999999999px;width:304.3px;height:9.37px;background:#d9d9d9;"></div>
<div style="position:absolute;left:127px;top:323.0799999999999px;width:38.3px;height:9.37px;background:#d8efb4;"></div>
<div style="position:absolute;left:165.3px;top:323.0799999999999px;width:38.3px;height:9.37px;background:#93d7a3;"></div>
<div style="position:absolute;left:27px;top:323.0799999999999px;width:45px;height:9.37px;overflow:hidden;"><div style="position:absolute;left:0;top:0.9px;font-size:5.6px;line-height:5.6px;font-weight:bold;color:#222;white-space:nowrap;">Event<br>Programming</div></div>
<div style="position:absolute;left:-78.50px;top:326.70px;width:200px;text-align:right;font-size:3.60px;line-height:4.32px;color:#666;font-weight:bold;white-space:nowrap;letter-spacing:0.55px;">SUBTOTALS</div>
<div style="position:absolute;left:132.50px;top:326.36px;font-size:5.00px;line-height:6.00px;color:#111;font-weight:bold;white-space:nowrap;">$</div>
<div style="position:absolute;left:-39.80px;top:326.24px;width:200px;text-align:right;font-size:5.20px;line-height:6.24px;color:#1a1a1a;font-weight:bold;white-space:nowrap;">2,000.00</div>
<div style="position:absolute;left:170.50px;top:326.36px;font-size:5.00px;line-height:6.00px;color:#111;font-weight:bold;white-space:nowrap;">$</div>
<div style="position:absolute;left:-1.80px;top:326.24px;width:200px;text-align:right;font-size:5.20px;line-height:6.24px;color:#1a1a1a;font-weight:bold;white-space:nowrap;">1,800.00</div>
<div style="position:absolute;left:127px;top:332.44999999999993px;width:38.3px;height:7.4px;background:#f3f9e4;"></div>
<div style="position:absolute;left:165.3px;top:332.44999999999993px;width:38.3px;height:7.4px;background:#d2ecd6;"></div>
<div style="position:absolute;left:27.00px;top:334.78px;font-size:4.95px;line-height:5.94px;color:#383838;font-weight:normal;white-space:nowrap;">Speakers</div>
<div style="position:absolute;left:130.30px;top:334.47px;font-size:4.80px;line-height:5.76px;color:#333;font-weight:normal;white-space:nowrap;">$</div>
<div style="position:absolute;left:-37.20px;top:334.15px;width:200px;text-align:right;font-size:5.00px;line-height:6.00px;color:#4a4a4a;font-weight:normal;white-space:nowrap;letter-spacing:-0.25px;">1,500.00</div>
<div style="position:absolute;left:168.50px;top:334.47px;font-size:4.80px;line-height:5.76px;color:#333;font-weight:normal;white-space:nowrap;">$</div>
<div style="position:absolute;left:1.30px;top:334.15px;width:200px;text-align:right;font-size:5.00px;line-height:6.00px;color:#4a4a4a;font-weight:normal;white-space:nowrap;letter-spacing:-0.25px;">1,300.00</div>
<div style="position:absolute;left:127px;top:339.8499999999999px;width:38.3px;height:7.4px;background:#f3f9e4;"></div>
<div style="position:absolute;left:165.3px;top:339.8499999999999px;width:38.3px;height:7.4px;background:#d2ecd6;"></div>
<div style="position:absolute;left:27.00px;top:342.18px;font-size:4.95px;line-height:5.94px;color:#383838;font-weight:normal;white-space:nowrap;">Performers</div>
<div style="position:absolute;left:130.30px;top:341.87px;font-size:4.80px;line-height:5.76px;color:#333;font-weight:normal;white-space:nowrap;">$</div>
<div style="position:absolute;left:-37.20px;top:341.55px;width:200px;text-align:right;font-size:5.00px;line-height:6.00px;color:#4a4a4a;font-weight:normal;white-space:nowrap;letter-spacing:-0.25px;">500.00</div>
<div style="position:absolute;left:168.50px;top:341.87px;font-size:4.80px;line-height:5.76px;color:#333;font-weight:normal;white-space:nowrap;">$</div>
<div style="position:absolute;left:1.30px;top:341.55px;width:200px;text-align:right;font-size:5.00px;line-height:6.00px;color:#4a4a4a;font-weight:normal;white-space:nowrap;letter-spacing:-0.25px;">500.00</div>
<div style="position:absolute;left:127px;top:347.2499999999999px;width:38.3px;height:7.4px;background:#f3f9e4;"></div>
<div style="position:absolute;left:165.3px;top:347.2499999999999px;width:38.3px;height:7.4px;background:#d2ecd6;"></div>
<div style="position:absolute;left:27.00px;top:349.58px;font-size:4.95px;line-height:5.94px;color:#383838;font-weight:normal;white-space:nowrap;">Video Production</div>
<div style="position:absolute;left:127px;top:354.64999999999986px;width:38.3px;height:7.4px;background:#f3f9e4;"></div>
<div style="position:absolute;left:165.3px;top:354.64999999999986px;width:38.3px;height:7.4px;background:#d2ecd6;"></div>
<div style="position:absolute;left:27.00px;top:356.98px;font-size:4.95px;line-height:5.94px;color:#383838;font-weight:normal;white-space:nowrap;">Presentation Graphics</div>
<div style="position:absolute;left:127px;top:362.04999999999984px;width:38.3px;height:7.4px;background:#f3f9e4;"></div>
<div style="position:absolute;left:165.3px;top:362.04999999999984px;width:38.3px;height:7.4px;background:#d2ecd6;"></div>
<div style="position:absolute;left:127px;top:369.4499999999998px;width:38.3px;height:7.4px;background:#f3f9e4;"></div>
<div style="position:absolute;left:165.3px;top:369.4499999999998px;width:38.3px;height:7.4px;background:#d2ecd6;"></div>
<div style="position:absolute;left:21.3px;top:376.8499999999998px;width:304.3px;height:9.37px;background:#d9d9d9;"></div>
<div style="position:absolute;left:127px;top:376.8499999999998px;width:38.3px;height:9.37px;background:#d8efb4;"></div>
<div style="position:absolute;left:165.3px;top:376.8499999999998px;width:38.3px;height:9.37px;background:#93d7a3;"></div>
<div style="position:absolute;left:27.00px;top:380.07px;font-size:5.60px;line-height:6.72px;color:#222;font-weight:bold;white-space:nowrap;">Social Media</div>
<div style="position:absolute;left:-78.50px;top:380.47px;width:200px;text-align:right;font-size:3.60px;line-height:4.32px;color:#666;font-weight:bold;white-space:nowrap;letter-spacing:0.55px;">SUBTOTALS</div>
<div style="position:absolute;left:132.50px;top:380.13px;font-size:5.00px;line-height:6.00px;color:#111;font-weight:bold;white-space:nowrap;">$</div>
<div style="position:absolute;left:-39.80px;top:380.01px;width:200px;text-align:right;font-size:5.20px;line-height:6.24px;color:#1a1a1a;font-weight:bold;white-space:nowrap;">350.00</div>
<div style="position:absolute;left:170.50px;top:380.13px;font-size:5.00px;line-height:6.00px;color:#111;font-weight:bold;white-space:nowrap;">$</div>
<div style="position:absolute;left:-1.80px;top:380.01px;width:200px;text-align:right;font-size:5.20px;line-height:6.24px;color:#1a1a1a;font-weight:bold;white-space:nowrap;">350.00</div>
<div style="position:absolute;left:127px;top:386.2199999999998px;width:38.3px;height:7.4px;background:#f3f9e4;"></div>
<div style="position:absolute;left:165.3px;top:386.2199999999998px;width:38.3px;height:7.4px;background:#d2ecd6;"></div>
<div style="position:absolute;left:27.00px;top:388.55px;font-size:4.95px;line-height:5.94px;color:#383838;font-weight:normal;white-space:nowrap;">Twitter</div>
<div style="position:absolute;left:130.30px;top:388.24px;font-size:4.80px;line-height:5.76px;color:#333;font-weight:normal;white-space:nowrap;">$</div>
<div style="position:absolute;left:-37.20px;top:387.92px;width:200px;text-align:right;font-size:5.00px;line-height:6.00px;color:#4a4a4a;font-weight:normal;white-space:nowrap;letter-spacing:-0.25px;">50.00</div>
<div style="position:absolute;left:168.50px;top:388.24px;font-size:4.80px;line-height:5.76px;color:#333;font-weight:normal;white-space:nowrap;">$</div>
<div style="position:absolute;left:1.30px;top:387.92px;width:200px;text-align:right;font-size:5.00px;line-height:6.00px;color:#4a4a4a;font-weight:normal;white-space:nowrap;letter-spacing:-0.25px;">50.00</div>
<div style="position:absolute;left:127px;top:393.6199999999998px;width:38.3px;height:7.4px;background:#f3f9e4;"></div>
<div style="position:absolute;left:165.3px;top:393.6199999999998px;width:38.3px;height:7.4px;background:#d2ecd6;"></div>
<div style="position:absolute;left:27.00px;top:395.95px;font-size:4.95px;line-height:5.94px;color:#383838;font-weight:normal;white-space:nowrap;">Facebook</div>
<div style="position:absolute;left:130.30px;top:395.64px;font-size:4.80px;line-height:5.76px;color:#333;font-weight:normal;white-space:nowrap;">$</div>
<div style="position:absolute;left:-37.20px;top:395.32px;width:200px;text-align:right;font-size:5.00px;line-height:6.00px;color:#4a4a4a;font-weight:normal;white-space:nowrap;letter-spacing:-0.25px;">50.00</div>
<div style="position:absolute;left:168.50px;top:395.64px;font-size:4.80px;line-height:5.76px;color:#333;font-weight:normal;white-space:nowrap;">$</div>
<div style="position:absolute;left:1.30px;top:395.32px;width:200px;text-align:right;font-size:5.00px;line-height:6.00px;color:#4a4a4a;font-weight:normal;white-space:nowrap;letter-spacing:-0.25px;">50.00</div>
<div style="position:absolute;left:127px;top:401.01999999999975px;width:38.3px;height:7.4px;background:#f3f9e4;"></div>
<div style="position:absolute;left:165.3px;top:401.01999999999975px;width:38.3px;height:7.4px;background:#d2ecd6;"></div>
<div style="position:absolute;left:27.00px;top:403.35px;font-size:4.95px;line-height:5.94px;color:#383838;font-weight:normal;white-space:nowrap;">Pinterest</div>
<div style="position:absolute;left:130.30px;top:403.04px;font-size:4.80px;line-height:5.76px;color:#333;font-weight:normal;white-space:nowrap;">$</div>
<div style="position:absolute;left:-37.20px;top:402.72px;width:200px;text-align:right;font-size:5.00px;line-height:6.00px;color:#4a4a4a;font-weight:normal;white-space:nowrap;letter-spacing:-0.25px;">50.00</div>
<div style="position:absolute;left:168.50px;top:403.04px;font-size:4.80px;line-height:5.76px;color:#333;font-weight:normal;white-space:nowrap;">$</div>
<div style="position:absolute;left:1.30px;top:402.72px;width:200px;text-align:right;font-size:5.00px;line-height:6.00px;color:#4a4a4a;font-weight:normal;white-space:nowrap;letter-spacing:-0.25px;">50.00</div>
<div style="position:absolute;left:127px;top:408.41999999999973px;width:38.3px;height:7.4px;background:#f3f9e4;"></div>
<div style="position:absolute;left:165.3px;top:408.41999999999973px;width:38.3px;height:7.4px;background:#d2ecd6;"></div>
<div style="position:absolute;left:27.00px;top:410.75px;font-size:4.95px;line-height:5.94px;color:#383838;font-weight:normal;white-space:nowrap;">Instagram</div>
<div style="position:absolute;left:130.30px;top:410.44px;font-size:4.80px;line-height:5.76px;color:#333;font-weight:normal;white-space:nowrap;">$</div>
<div style="position:absolute;left:-37.20px;top:410.12px;width:200px;text-align:right;font-size:5.00px;line-height:6.00px;color:#4a4a4a;font-weight:normal;white-space:nowrap;letter-spacing:-0.25px;">50.00</div>
<div style="position:absolute;left:168.50px;top:410.44px;font-size:4.80px;line-height:5.76px;color:#333;font-weight:normal;white-space:nowrap;">$</div>
<div style="position:absolute;left:1.30px;top:410.12px;width:200px;text-align:right;font-size:5.00px;line-height:6.00px;color:#4a4a4a;font-weight:normal;white-space:nowrap;letter-spacing:-0.25px;">50.00</div>
<div style="position:absolute;left:127px;top:415.8199999999997px;width:38.3px;height:7.4px;background:#f3f9e4;"></div>
<div style="position:absolute;left:165.3px;top:415.8199999999997px;width:38.3px;height:7.4px;background:#d2ecd6;"></div>
<div style="position:absolute;left:27.00px;top:418.15px;font-size:4.95px;line-height:5.94px;color:#383838;font-weight:normal;white-space:nowrap;">Google+</div>
<div style="position:absolute;left:130.30px;top:417.84px;font-size:4.80px;line-height:5.76px;color:#333;font-weight:normal;white-space:nowrap;">$</div>
<div style="position:absolute;left:-37.20px;top:417.52px;width:200px;text-align:right;font-size:5.00px;line-height:6.00px;color:#4a4a4a;font-weight:normal;white-space:nowrap;letter-spacing:-0.25px;">50.00</div>
<div style="position:absolute;left:168.50px;top:417.84px;font-size:4.80px;line-height:5.76px;color:#333;font-weight:normal;white-space:nowrap;">$</div>
<div style="position:absolute;left:1.30px;top:417.52px;width:200px;text-align:right;font-size:5.00px;line-height:6.00px;color:#4a4a4a;font-weight:normal;white-space:nowrap;letter-spacing:-0.25px;">50.00</div>
<div style="position:absolute;left:127px;top:423.2199999999997px;width:38.3px;height:7.4px;background:#f3f9e4;"></div>
<div style="position:absolute;left:165.3px;top:423.2199999999997px;width:38.3px;height:7.4px;background:#d2ecd6;"></div>
<div style="position:absolute;left:27.00px;top:425.55px;font-size:4.95px;line-height:5.94px;color:#383838;font-weight:normal;white-space:nowrap;">LinkedIn</div>
<div style="position:absolute;left:130.30px;top:425.24px;font-size:4.80px;line-height:5.76px;color:#333;font-weight:normal;white-space:nowrap;">$</div>
<div style="position:absolute;left:-37.20px;top:424.92px;width:200px;text-align:right;font-size:5.00px;line-height:6.00px;color:#4a4a4a;font-weight:normal;white-space:nowrap;letter-spacing:-0.25px;">50.00</div>
<div style="position:absolute;left:168.50px;top:425.24px;font-size:4.80px;line-height:5.76px;color:#333;font-weight:normal;white-space:nowrap;">$</div>
<div style="position:absolute;left:1.30px;top:424.92px;width:200px;text-align:right;font-size:5.00px;line-height:6.00px;color:#4a4a4a;font-weight:normal;white-space:nowrap;letter-spacing:-0.25px;">50.00</div>
<div style="position:absolute;left:127px;top:430.61999999999966px;width:38.3px;height:7.4px;background:#f3f9e4;"></div>
<div style="position:absolute;left:165.3px;top:430.61999999999966px;width:38.3px;height:7.4px;background:#d2ecd6;"></div>
<div style="position:absolute;left:27.00px;top:432.95px;font-size:4.95px;line-height:5.94px;color:#383838;font-weight:normal;white-space:nowrap;">Snapchat</div>
<div style="position:absolute;left:130.30px;top:432.64px;font-size:4.80px;line-height:5.76px;color:#333;font-weight:normal;white-space:nowrap;">$</div>
<div style="position:absolute;left:-37.20px;top:432.32px;width:200px;text-align:right;font-size:5.00px;line-height:6.00px;color:#4a4a4a;font-weight:normal;white-space:nowrap;letter-spacing:-0.25px;">50.00</div>
<div style="position:absolute;left:168.50px;top:432.64px;font-size:4.80px;line-height:5.76px;color:#333;font-weight:normal;white-space:nowrap;">$</div>
<div style="position:absolute;left:1.30px;top:432.32px;width:200px;text-align:right;font-size:5.00px;line-height:6.00px;color:#4a4a4a;font-weight:normal;white-space:nowrap;letter-spacing:-0.25px;">50.00</div>
<div style="position:absolute;left:127px;top:438.01999999999964px;width:38.3px;height:7.4px;background:#f3f9e4;"></div>
<div style="position:absolute;left:165.3px;top:438.01999999999964px;width:38.3px;height:7.4px;background:#d2ecd6;"></div>
<div style="position:absolute;left:21.3px;top:445.4199999999996px;width:304.3px;height:9.37px;background:#d9d9d9;"></div>
<div style="position:absolute;left:127px;top:445.4199999999996px;width:38.3px;height:9.37px;background:#d8efb4;"></div>
<div style="position:absolute;left:165.3px;top:445.4199999999996px;width:38.3px;height:9.37px;background:#93d7a3;"></div>
<div style="position:absolute;left:27.00px;top:448.64px;font-size:5.60px;line-height:6.72px;color:#222;font-weight:bold;white-space:nowrap;">Advertising</div>
<div style="position:absolute;left:-78.50px;top:449.04px;width:200px;text-align:right;font-size:3.60px;line-height:4.32px;color:#666;font-weight:bold;white-space:nowrap;letter-spacing:0.55px;">SUBTOTALS</div>
<div style="position:absolute;left:132.50px;top:448.70px;font-size:5.00px;line-height:6.00px;color:#111;font-weight:bold;white-space:nowrap;">$</div>
<div style="position:absolute;left:-39.80px;top:448.58px;width:200px;text-align:right;font-size:5.20px;line-height:6.24px;color:#1a1a1a;font-weight:bold;white-space:nowrap;">1,400.00</div>
<div style="position:absolute;left:170.50px;top:448.70px;font-size:5.00px;line-height:6.00px;color:#111;font-weight:bold;white-space:nowrap;">$</div>
<div style="position:absolute;left:-1.80px;top:448.58px;width:200px;text-align:right;font-size:5.20px;line-height:6.24px;color:#1a1a1a;font-weight:bold;white-space:nowrap;">500.00</div>
<div style="position:absolute;left:127px;top:454.7899999999996px;width:38.3px;height:7.4px;background:#f3f9e4;"></div>
<div style="position:absolute;left:165.3px;top:454.7899999999996px;width:38.3px;height:7.4px;background:#d2ecd6;"></div>
<div style="position:absolute;left:27.00px;top:457.12px;font-size:4.95px;line-height:5.94px;color:#383838;font-weight:normal;white-space:nowrap;">Online</div>
<div style="position:absolute;left:130.30px;top:456.81px;font-size:4.80px;line-height:5.76px;color:#333;font-weight:normal;white-space:nowrap;">$</div>
<div style="position:absolute;left:-37.20px;top:456.49px;width:200px;text-align:right;font-size:5.00px;line-height:6.00px;color:#4a4a4a;font-weight:normal;white-space:nowrap;letter-spacing:-0.25px;">400.00</div>
<div style="position:absolute;left:168.50px;top:456.81px;font-size:4.80px;line-height:5.76px;color:#333;font-weight:normal;white-space:nowrap;">$</div>
<div style="position:absolute;left:1.30px;top:456.49px;width:200px;text-align:right;font-size:5.00px;line-height:6.00px;color:#4a4a4a;font-weight:normal;white-space:nowrap;letter-spacing:-0.25px;">300.00</div>
<div style="position:absolute;left:127px;top:462.1899999999996px;width:38.3px;height:7.4px;background:#f3f9e4;"></div>
<div style="position:absolute;left:165.3px;top:462.1899999999996px;width:38.3px;height:7.4px;background:#d2ecd6;"></div>
<div style="position:absolute;left:27.00px;top:464.52px;font-size:4.95px;line-height:5.94px;color:#383838;font-weight:normal;white-space:nowrap;">Print</div>
<div style="position:absolute;left:130.30px;top:464.21px;font-size:4.80px;line-height:5.76px;color:#333;font-weight:normal;white-space:nowrap;">$</div>
<div style="position:absolute;left:-37.20px;top:463.89px;width:200px;text-align:right;font-size:5.00px;line-height:6.00px;color:#4a4a4a;font-weight:normal;white-space:nowrap;letter-spacing:-0.25px;">1,000.00</div>
<div style="position:absolute;left:168.50px;top:464.21px;font-size:4.80px;line-height:5.76px;color:#333;font-weight:normal;white-space:nowrap;">$</div>
<div style="position:absolute;left:1.30px;top:463.89px;width:200px;text-align:right;font-size:5.00px;line-height:6.00px;color:#4a4a4a;font-weight:normal;white-space:nowrap;letter-spacing:-0.25px;">200.00</div>
<div style="position:absolute;left:127px;top:469.5899999999996px;width:38.3px;height:7.4px;background:#f3f9e4;"></div>
<div style="position:absolute;left:165.3px;top:469.5899999999996px;width:38.3px;height:7.4px;background:#d2ecd6;"></div>
<div style="position:absolute;left:27.00px;top:471.92px;font-size:4.95px;line-height:5.94px;color:#383838;font-weight:normal;white-space:nowrap;">Outdoor</div>
<div style="position:absolute;left:127px;top:476.98999999999955px;width:38.3px;height:7.4px;background:#f3f9e4;"></div>
<div style="position:absolute;left:165.3px;top:476.98999999999955px;width:38.3px;height:7.4px;background:#d2ecd6;"></div>
<div style="position:absolute;left:27.00px;top:479.32px;font-size:4.95px;line-height:5.94px;color:#383838;font-weight:normal;white-space:nowrap;">Radio</div>
<div style="position:absolute;left:127px;top:484.38999999999953px;width:38.3px;height:7.4px;background:#f3f9e4;"></div>
<div style="position:absolute;left:165.3px;top:484.38999999999953px;width:38.3px;height:7.4px;background:#d2ecd6;"></div>
<div style="position:absolute;left:27.00px;top:486.72px;font-size:4.95px;line-height:5.94px;color:#383838;font-weight:normal;white-space:nowrap;">Television</div>
<div style="position:absolute;left:127px;top:491.7899999999995px;width:38.3px;height:7.4px;background:#f3f9e4;"></div>
<div style="position:absolute;left:165.3px;top:491.7899999999995px;width:38.3px;height:7.4px;background:#d2ecd6;"></div>
<div style="position:absolute;left:127px;top:499.1899999999995px;width:38.3px;height:7.4px;background:#f3f9e4;"></div>
<div style="position:absolute;left:165.3px;top:499.1899999999995px;width:38.3px;height:7.4px;background:#d2ecd6;"></div>
<div style="position:absolute;left:127px;top:506.58999999999946px;width:38.3px;height:7.4px;background:#f3f9e4;"></div>
<div style="position:absolute;left:165.3px;top:506.58999999999946px;width:38.3px;height:7.4px;background:#d2ecd6;"></div>
<div style="position:absolute;left:127px;top:499.1899999999995px;width:38.3px;height:7.4px;background:#f3f9e4;"></div>
<div style="position:absolute;left:165.3px;top:499.1899999999995px;width:38.3px;height:7.4px;background:#d2ecd6;"></div>
<div style="position:absolute;left:127px;top:506.58999999999946px;width:38.3px;height:7.4px;background:#f3f9e4;"></div>
<div style="position:absolute;left:165.3px;top:506.58999999999946px;width:38.3px;height:7.4px;background:#d2ecd6;"></div>
<div style="position:absolute;left:21.3px;top:154.02px;width:304.3px;height:0.7px;background:#cfcfcf;"></div>
<div style="position:absolute;left:21.3px;top:161.42000000000002px;width:304.3px;height:0.7px;background:#cfcfcf;"></div>
<div style="position:absolute;left:21.3px;top:168.82000000000002px;width:304.3px;height:0.7px;background:#cfcfcf;"></div>
<div style="position:absolute;left:21.3px;top:176.22000000000003px;width:304.3px;height:0.7px;background:#cfcfcf;"></div>
<div style="position:absolute;left:21.3px;top:183.62000000000003px;width:304.3px;height:0.7px;background:#cfcfcf;"></div>
<div style="position:absolute;left:21.3px;top:191.02000000000004px;width:304.3px;height:0.7px;background:#cfcfcf;"></div>
<div style="position:absolute;left:21.3px;top:198.42000000000004px;width:304.3px;height:0.7px;background:#cfcfcf;"></div>
<div style="position:absolute;left:21.3px;top:205.82000000000005px;width:304.3px;height:0.7px;background:#cfcfcf;"></div>
<div style="position:absolute;left:21.3px;top:215.19000000000005px;width:304.3px;height:0.7px;background:#cfcfcf;"></div>
<div style="position:absolute;left:21.3px;top:222.59000000000006px;width:304.3px;height:0.7px;background:#cfcfcf;"></div>
<div style="position:absolute;left:21.3px;top:229.99000000000007px;width:304.3px;height:0.7px;background:#cfcfcf;"></div>
<div style="position:absolute;left:21.3px;top:237.39000000000007px;width:304.3px;height:0.7px;background:#cfcfcf;"></div>
<div style="position:absolute;left:21.3px;top:244.79000000000008px;width:304.3px;height:0.7px;background:#cfcfcf;"></div>
<div style="position:absolute;left:21.3px;top:254.16000000000008px;width:304.3px;height:0.7px;background:#cfcfcf;"></div>
<div style="position:absolute;left:21.3px;top:261.56000000000006px;width:304.3px;height:0.7px;background:#cfcfcf;"></div>
<div style="position:absolute;left:21.3px;top:268.96000000000004px;width:304.3px;height:0.7px;background:#cfcfcf;"></div>
<div style="position:absolute;left:21.3px;top:276.36px;width:304.3px;height:0.7px;background:#cfcfcf;"></div>
<div style="position:absolute;left:21.3px;top:283.76px;width:304.3px;height:0.7px;background:#cfcfcf;"></div>
<div style="position:absolute;left:21.3px;top:293.13px;width:304.3px;height:0.7px;background:#cfcfcf;"></div>
<div style="position:absolute;left:21.3px;top:300.53px;width:304.3px;height:0.7px;background:#cfcfcf;"></div>
<div style="position:absolute;left:21.3px;top:307.92999999999995px;width:304.3px;height:0.7px;background:#cfcfcf;"></div>
<div style="position:absolute;left:21.3px;top:315.3299999999999px;width:304.3px;height:0.7px;background:#cfcfcf;"></div>
<div style="position:absolute;left:21.3px;top:322.7299999999999px;width:304.3px;height:0.7px;background:#cfcfcf;"></div>
<div style="position:absolute;left:21.3px;top:332.0999999999999px;width:304.3px;height:0.7px;background:#cfcfcf;"></div>
<div style="position:absolute;left:21.3px;top:339.4999999999999px;width:304.3px;height:0.7px;background:#cfcfcf;"></div>
<div style="position:absolute;left:21.3px;top:346.89999999999986px;width:304.3px;height:0.7px;background:#cfcfcf;"></div>
<div style="position:absolute;left:21.3px;top:354.29999999999984px;width:304.3px;height:0.7px;background:#cfcfcf;"></div>
<div style="position:absolute;left:21.3px;top:361.6999999999998px;width:304.3px;height:0.7px;background:#cfcfcf;"></div>
<div style="position:absolute;left:21.3px;top:369.0999999999998px;width:304.3px;height:0.7px;background:#cfcfcf;"></div>
<div style="position:absolute;left:21.3px;top:376.4999999999998px;width:304.3px;height:0.7px;background:#cfcfcf;"></div>
<div style="position:absolute;left:21.3px;top:385.8699999999998px;width:304.3px;height:0.7px;background:#cfcfcf;"></div>
<div style="position:absolute;left:21.3px;top:393.26999999999975px;width:304.3px;height:0.7px;background:#cfcfcf;"></div>
<div style="position:absolute;left:21.3px;top:400.66999999999973px;width:304.3px;height:0.7px;background:#cfcfcf;"></div>
<div style="position:absolute;left:21.3px;top:408.0699999999997px;width:304.3px;height:0.7px;background:#cfcfcf;"></div>
<div style="position:absolute;left:21.3px;top:415.4699999999997px;width:304.3px;height:0.7px;background:#cfcfcf;"></div>
<div style="position:absolute;left:21.3px;top:422.86999999999966px;width:304.3px;height:0.7px;background:#cfcfcf;"></div>
<div style="position:absolute;left:21.3px;top:430.26999999999964px;width:304.3px;height:0.7px;background:#cfcfcf;"></div>
<div style="position:absolute;left:21.3px;top:437.6699999999996px;width:304.3px;height:0.7px;background:#cfcfcf;"></div>
<div style="position:absolute;left:21.3px;top:445.0699999999996px;width:304.3px;height:0.7px;background:#cfcfcf;"></div>
<div style="position:absolute;left:21.3px;top:454.4399999999996px;width:304.3px;height:0.7px;background:#cfcfcf;"></div>
<div style="position:absolute;left:21.3px;top:461.8399999999996px;width:304.3px;height:0.7px;background:#cfcfcf;"></div>
<div style="position:absolute;left:21.3px;top:469.23999999999955px;width:304.3px;height:0.7px;background:#cfcfcf;"></div>
<div style="position:absolute;left:21.3px;top:476.63999999999953px;width:304.3px;height:0.7px;background:#cfcfcf;"></div>
<div style="position:absolute;left:21.3px;top:484.0399999999995px;width:304.3px;height:0.7px;background:#cfcfcf;"></div>
<div style="position:absolute;left:21.3px;top:491.4399999999995px;width:304.3px;height:0.7px;background:#cfcfcf;"></div>
<div style="position:absolute;left:21.3px;top:498.83999999999946px;width:304.3px;height:0.7px;background:#cfcfcf;"></div>
<div style="position:absolute;left:21.3px;top:506.23999999999944px;width:304.3px;height:0.7px;background:#cfcfcf;"></div>
<div style="position:absolute;left:20.900000000000002px;top:130.0px;width:0.8px;height:373.0px;background:#c4c4c4;"></div>
<div style="position:absolute;left:126.6px;top:130.0px;width:0.8px;height:373.0px;background:#c4c4c4;"></div>
<div style="position:absolute;left:164.9px;top:130.0px;width:0.8px;height:373.0px;background:#c4c4c4;"></div>
<div style="position:absolute;left:203.2px;top:130.0px;width:0.8px;height:373.0px;background:#c4c4c4;"></div>
<div style="position:absolute;left:325.20000000000005px;top:130.0px;width:0.8px;height:373.0px;background:#c4c4c4;"></div>
<svg style="position:absolute;left:0;top:0" width="680" height="524" viewBox="0 0 680 524"><path d="M453.10 255.00 L453.10 168.00 A87.0 87.0 0 0 1 525.93 207.42 Z" fill="#3d86b8" stroke="rgba(255,255,255,0.7)" stroke-width="0.3"/><path d="M453.10 255.00 L525.93 207.42 A87.0 87.0 0 0 1 530.29 295.14 Z" fill="#a2b52a" stroke="rgba(255,255,255,0.7)" stroke-width="0.3"/><path d="M453.10 255.00 L530.29 295.14 A87.0 87.0 0 0 1 475.85 338.97 Z" fill="#f39100" stroke="rgba(255,255,255,0.7)" stroke-width="0.3"/><path d="M453.10 255.00 L475.85 338.97 A87.0 87.0 0 0 1 458.85 341.81 Z" fill="#7f7f7f" stroke="rgba(255,255,255,0.7)" stroke-width="0.3"/><path d="M453.10 255.00 L458.85 341.81 A87.0 87.0 0 0 1 370.36 281.88 Z" fill="#fdc010" stroke="rgba(255,255,255,0.7)" stroke-width="0.3"/><path d="M453.10 255.00 L370.36 281.88 A87.0 87.0 0 0 1 366.40 262.18 Z" fill="#e0502a" stroke="rgba(255,255,255,0.7)" stroke-width="0.3"/><path d="M453.10 255.00 L366.40 262.18 A87.0 87.0 0 0 1 395.24 190.03 Z" fill="#234f66" stroke="rgba(255,255,255,0.7)" stroke-width="0.3"/><path d="M453.10 255.00 L395.24 190.03 A87.0 87.0 0 0 1 419.47 174.76 Z" fill="#5d6a1c" stroke="rgba(255,255,255,0.7)" stroke-width="0.3"/><path d="M453.10 255.00 L419.47 174.76 A87.0 87.0 0 0 1 453.10 168.00 Z" fill="#8d5306" stroke="rgba(255,255,255,0.7)" stroke-width="0.3"/></svg>
<div style="position:absolute;left:405.00px;top:166.39px;width:200px;text-align:center;font-size:3.85px;line-height:4.62px;color:#505050;font-weight:normal;white-space:nowrap;">$1,500.00</div>
<div style="position:absolute;left:405.00px;top:171.39px;width:200px;text-align:center;font-size:3.85px;line-height:4.62px;color:#505050;font-weight:normal;white-space:nowrap;">16%</div>
<div style="position:absolute;left:453.00px;top:246.09px;width:200px;text-align:center;font-size:3.85px;line-height:4.62px;color:#505050;font-weight:normal;white-space:nowrap;">$1,600.00</div>
<div style="position:absolute;left:453.00px;top:251.09px;width:200px;text-align:center;font-size:3.85px;line-height:4.62px;color:#505050;font-weight:normal;white-space:nowrap;">17%</div>
<div style="position:absolute;left:420.50px;top:327.59px;width:200px;text-align:center;font-size:3.85px;line-height:4.62px;color:#505050;font-weight:normal;white-space:nowrap;">$1,250.00</div>
<div style="position:absolute;left:420.50px;top:332.59px;width:200px;text-align:center;font-size:3.85px;line-height:4.62px;color:#505050;font-weight:normal;white-space:nowrap;">13%</div>
<div style="position:absolute;left:371.00px;top:346.19px;width:200px;text-align:center;font-size:3.85px;line-height:4.62px;color:#505050;font-weight:normal;white-space:nowrap;">$300.00</div>
<div style="position:absolute;left:371.00px;top:351.19px;width:200px;text-align:center;font-size:3.85px;line-height:4.62px;color:#505050;font-weight:normal;white-space:nowrap;">3%</div>
<div style="position:absolute;left:292.00px;top:332.09px;width:200px;text-align:center;font-size:3.85px;line-height:4.62px;color:#505050;font-weight:normal;white-space:nowrap;">$2,000.00</div>
<div style="position:absolute;left:292.00px;top:337.09px;width:200px;text-align:center;font-size:3.85px;line-height:4.62px;color:#505050;font-weight:normal;white-space:nowrap;">21%</div>
<div style="position:absolute;left:255.50px;top:270.59px;width:200px;text-align:center;font-size:3.85px;line-height:4.62px;color:#505050;font-weight:normal;white-space:nowrap;">$350.00</div>
<div style="position:absolute;left:255.50px;top:275.59px;width:200px;text-align:center;font-size:3.85px;line-height:4.62px;color:#505050;font-weight:normal;white-space:nowrap;">4%</div>
<div style="position:absolute;left:257.50px;top:216.39px;width:200px;text-align:center;font-size:3.85px;line-height:4.62px;color:#505050;font-weight:normal;white-space:nowrap;">$1,400.00</div>
<div style="position:absolute;left:257.50px;top:221.39px;width:200px;text-align:center;font-size:3.85px;line-height:4.62px;color:#505050;font-weight:normal;white-space:nowrap;">15%</div>
<div style="position:absolute;left:295.50px;top:170.69px;width:200px;text-align:center;font-size:3.85px;line-height:4.62px;color:#505050;font-weight:normal;white-space:nowrap;">$500.00</div>
<div style="position:absolute;left:295.50px;top:175.69px;width:200px;text-align:center;font-size:3.85px;line-height:4.62px;color:#505050;font-weight:normal;white-space:nowrap;">5%</div>
<div style="position:absolute;left:331.00px;top:158.29px;width:200px;text-align:center;font-size:3.85px;line-height:4.62px;color:#505050;font-weight:normal;white-space:nowrap;">$600.00</div>
<div style="position:absolute;left:331.00px;top:163.29px;width:200px;text-align:center;font-size:3.85px;line-height:4.62px;color:#505050;font-weight:normal;white-space:nowrap;">6%</div>
<div style="position:absolute;left:499.00px;top:162.86px;width:200px;text-align:center;font-size:6.40px;line-height:7.68px;color:#7f7f7f;font-weight:normal;white-space:nowrap;">PERCENT <span style="font-size:0.75em">OF</span> BUDGET</div>
<div style="position:absolute;left:499.00px;top:171.22px;width:200px;text-align:center;font-size:4.80px;line-height:5.76px;color:#8c8c8c;font-weight:normal;white-space:nowrap;">(PROJECTED)</div>
<div style="position:absolute;left:578px;top:215px;width:3px;height:3px;background:#3d86b8;"></div>
<div style="position:absolute;left:582.30px;top:214.34px;font-size:6.10px;line-height:7.32px;color:#606060;font-weight:normal;white-space:nowrap;letter-spacing:0.15px;">Venue</div>
<div style="position:absolute;left:578px;top:225px;width:3px;height:3px;background:#a2b52a;"></div>
<div style="position:absolute;left:582.30px;top:223.97px;font-size:6.10px;line-height:7.32px;color:#606060;font-weight:normal;white-space:nowrap;letter-spacing:0.15px;">Travel</div>
<div style="position:absolute;left:578px;top:235px;width:3px;height:3px;background:#f39100;"></div>
<div style="position:absolute;left:582.30px;top:233.59px;font-size:6.10px;line-height:7.32px;color:#606060;font-weight:normal;white-space:nowrap;letter-spacing:0.15px;">Public Relations</div>
<div style="position:absolute;left:578px;top:244px;width:3px;height:3px;background:#7f7f7f;"></div>
<div style="position:absolute;left:582.30px;top:243.22px;font-size:6.10px;line-height:7.32px;color:#606060;font-weight:normal;white-space:nowrap;letter-spacing:0.15px;">Décor</div>
<div style="position:absolute;left:578px;top:254px;width:3px;height:3px;background:#fdc010;"></div>
<div style="position:absolute;left:582.30px;top:252.84px;font-size:6.10px;line-height:7.32px;color:#606060;font-weight:normal;white-space:nowrap;letter-spacing:0.15px;">Event Programming</div>
<div style="position:absolute;left:578px;top:263px;width:3px;height:3px;background:#e0502a;"></div>
<div style="position:absolute;left:582.30px;top:262.46px;font-size:6.10px;line-height:7.32px;color:#606060;font-weight:normal;white-space:nowrap;letter-spacing:0.15px;">Social Media</div>
<div style="position:absolute;left:578px;top:273px;width:3px;height:3px;background:#234f66;"></div>
<div style="position:absolute;left:582.30px;top:272.09px;font-size:6.10px;line-height:7.32px;color:#606060;font-weight:normal;white-space:nowrap;letter-spacing:0.15px;">Advertising</div>
<div style="position:absolute;left:578px;top:283px;width:3px;height:3px;background:#5d6a1c;"></div>
<div style="position:absolute;left:582.30px;top:281.71px;font-size:6.10px;line-height:7.32px;color:#606060;font-weight:normal;white-space:nowrap;letter-spacing:0.15px;">Refreshments</div>
<div style="position:absolute;left:578px;top:292px;width:3px;height:3px;background:#8d5306;"></div>
<div style="position:absolute;left:582.30px;top:291.34px;font-size:6.10px;line-height:7.32px;color:#606060;font-weight:normal;white-space:nowrap;letter-spacing:0.15px;">Other</div>
<div style="position:absolute;left:398.50px;top:378.14px;width:200px;text-align:center;font-size:5.60px;line-height:6.72px;color:#595959;font-weight:normal;white-space:nowrap;">PROJECTED vs. ACTUAL</div>
<div style="position:absolute;left:354.5px;top:493.94999999999993px;width:302.5px;height:0.7px;background:#d9d9d9;"></div>
<div style="position:absolute;left:151.00px;top:493.04px;width:200px;text-align:right;font-size:3.60px;line-height:4.32px;color:#666;font-weight:normal;white-space:nowrap;">$500</div>
<div style="position:absolute;left:354.5px;top:467.44999999999993px;width:302.5px;height:0.7px;background:#d9d9d9;"></div>
<div style="position:absolute;left:151.00px;top:466.54px;width:200px;text-align:right;font-size:3.60px;line-height:4.32px;color:#666;font-weight:normal;white-space:nowrap;">$1,000</div>
<div style="position:absolute;left:354.5px;top:440.94999999999993px;width:302.5px;height:0.7px;background:#d9d9d9;"></div>
<div style="position:absolute;left:151.00px;top:440.04px;width:200px;text-align:right;font-size:3.60px;line-height:4.32px;color:#666;font-weight:normal;white-space:nowrap;">$1,500</div>
<div style="position:absolute;left:354.5px;top:414.44999999999993px;width:302.5px;height:0.7px;background:#d9d9d9;"></div>
<div style="position:absolute;left:151.00px;top:413.54px;width:200px;text-align:right;font-size:3.60px;line-height:4.32px;color:#666;font-weight:normal;white-space:nowrap;">$2,000</div>
<div style="position:absolute;left:354.5px;top:387.94999999999993px;width:302.5px;height:0.7px;background:#d9d9d9;"></div>
<div style="position:absolute;left:151.00px;top:387.04px;width:200px;text-align:right;font-size:3.60px;line-height:4.32px;color:#666;font-weight:normal;white-space:nowrap;">$2,500</div>
<div style="position:absolute;left:362.2px;top:441.29999999999995px;width:9.0px;height:79.5px;background:#92d050;"></div>
<div style="position:absolute;left:371.2px;top:457.19999999999993px;width:8.6px;height:63.599999999999994px;background:#00a84f;"></div>
<div style="position:absolute;left:395.84999999999997px;top:435.99999999999994px;width:9.0px;height:84.80000000000001px;background:#92d050;"></div>
<div style="position:absolute;left:404.84999999999997px;top:425.4px;width:8.6px;height:95.4px;background:#00a84f;"></div>
<div style="position:absolute;left:429.49999999999994px;top:454.54999999999995px;width:9.0px;height:66.25px;background:#92d050;"></div>
<div style="position:absolute;left:438.49999999999994px;top:470.44999999999993px;width:8.6px;height:50.349999999999994px;background:#00a84f;"></div>
<div style="position:absolute;left:496.7999999999999px;top:414.79999999999995px;width:9.0px;height:106.0px;background:#92d050;"></div>
<div style="position:absolute;left:505.7999999999999px;top:425.4px;width:8.6px;height:95.4px;background:#00a84f;"></div>
<div style="position:absolute;left:564.0999999999999px;top:446.59999999999997px;width:9.0px;height:74.19999999999999px;background:#92d050;"></div>
<div style="position:absolute;left:573.0999999999999px;top:494.29999999999995px;width:8.6px;height:26.5px;background:#00a84f;"></div>
<div style="position:absolute;left:597.7499999999999px;top:494.29999999999995px;width:9.0px;height:26.5px;background:#92d050;"></div>
<div style="position:absolute;left:606.7499999999999px;top:494.29999999999995px;width:8.6px;height:26.5px;background:#00a84f;"></div>
<div style="position:absolute;left:631.3999999999999px;top:488.99999999999994px;width:9.0px;height:31.799999999999997px;background:#92d050;"></div>
<div style="position:absolute;left:640.3999999999999px;top:496.94999999999993px;width:8.6px;height:23.85px;background:#00a84f;"></div>
<div style="position:absolute;left:526.50px;top:475.54px;font-size:10.60px;line-height:12.72px;color:rgba(110,110,110,0.5);font-weight:normal;white-space:nowrap;">Activate Windows</div>
<div style="position:absolute;left:526.60px;top:488.76px;font-size:7.90px;line-height:9.48px;color:rgba(110,110,110,0.5);font-weight:normal;white-space:nowrap;">Go to Settings to activate Windows.</div>
<div style="position:absolute;left:669px;top:87px;width:11px;height:416px;background:linear-gradient(90deg,#e4e7eb,#f0f2f5);border-left:1px solid #d0d4da;"></div>
<div style="position:absolute;left:670px;top:87.5px;width:9px;height:5px;background:#f7f8fa;border:1px solid #a9afb8;border-radius:1px;"></div>
<div style="position:absolute;left:670px;top:93.5px;width:9px;height:7.5px;background:linear-gradient(90deg,#f5f6f8,#e3e6ea);"></div>
<svg style="position:absolute;left:672.30px;top:96.00px;overflow:visible" width="4.40" height="2.60" viewBox="0 0 4.40 2.60"><path d="M0 2.60 H4.40 L2.20 0 Z" fill="#222"/></svg>
<div style="position:absolute;left:670px;top:101px;width:9px;height:394px;background:linear-gradient(90deg,#dde1e6,#eef1f4);"></div>
<div style="position:absolute;left:669.5px;top:101px;width:9px;height:229.5px;background:linear-gradient(90deg,#f3f5f8,#e6e9ee);border:0.8px solid #b4bac3;border-radius:1.5px;"></div>
<div style="position:absolute;left:672px;top:212.5px;width:4px;height:0.6px;background:#9aa0a8;"></div>
<div style="position:absolute;left:672px;top:214px;width:4px;height:0.6px;background:#9aa0a8;"></div>
<div style="position:absolute;left:672px;top:215.5px;width:4px;height:0.6px;background:#9aa0a8;"></div>
<div style="position:absolute;left:670px;top:495.5px;width:9px;height:7.5px;background:linear-gradient(90deg,#f5f6f8,#e3e6ea);"></div>
<svg style="position:absolute;left:672.30px;top:497.90px;overflow:visible" width="4.40" height="2.60" viewBox="0 0 4.40 2.60"><path d="M0 0 H4.40 L2.20 2.60 Z" fill="#222"/></svg>
<div style="position:absolute;left:0px;top:502.5px;width:680px;height:9px;background:#e4e7eb;border-top:1px solid #c9ced5;"></div>
<div style="position:absolute;left:0px;top:502.8px;width:33.5px;height:8.4px;background:linear-gradient(#eef1f4,#e2e6ea);border-right:0.8px solid #c4c9d0;"></div>
<div style="position:absolute;left:4.5px;top:505px;width:0.7px;height:4px;background:#333;"></div>
<svg style="position:absolute;left:5.50px;top:505.00px;overflow:visible" width="2.50" height="4.00" viewBox="0 0 2.50 4.00"><path d="M2.50 0 V4.00 L0 2.00 Z" fill="#333"/></svg>
<svg style="position:absolute;left:11.50px;top:505.00px;overflow:visible" width="2.50" height="4.00" viewBox="0 0 2.50 4.00"><path d="M2.50 0 V4.00 L0 2.00 Z" fill="#333"/></svg>
<svg style="position:absolute;left:18.50px;top:505.00px;overflow:visible" width="2.50" height="4.00" viewBox="0 0 2.50 4.00"><path d="M0 0 V4.00 L2.50 2.00 Z" fill="#333"/></svg>
<svg style="position:absolute;left:25.00px;top:505.00px;overflow:visible" width="2.50" height="4.00" viewBox="0 0 2.50 4.00"><path d="M0 0 V4.00 L2.50 2.00 Z" fill="#333"/></svg>
<div style="position:absolute;left:27.8px;top:505px;width:0.7px;height:4px;background:#333;"></div>
<svg style="position:absolute;left:0;top:502px" width="300" height="10" viewBox="0 0 300 10">
<path d="M34 0.5 L38 9 L84 9 L88 0.5 Z" fill="#f4f6f8" stroke="#b9c0c8" stroke-width="0.5"/>
<path d="M87 0 L91 9 L141 9 L145 0 Z" fill="#f2bd14" stroke="#b08a10" stroke-width="0.5"/>
<path d="M145 0 L149 9 L222 9 L226 0 Z" fill="#826619" stroke="#5a460f" stroke-width="0.5"/>
<path d="M226 0 L230 9 L268 9 L272 0 Z" fill="#64722a" stroke="#4a5218" stroke-width="0.5"/>
<path d="M272 0 L276 9 L286 9 L290 0 Z" fill="#e9ecef" stroke="#a9b0b8" stroke-width="0.5"/>
</svg>
<div style="position:absolute;left:38.70px;top:504.12px;font-size:6.80px;line-height:8.16px;color:#1f2f4f;font-weight:bold;white-space:nowrap;">Event Budget</div>
<div style="position:absolute;left:93.50px;top:504.14px;font-size:6.60px;line-height:7.92px;color:#7a5a00;font-weight:normal;white-space:nowrap;">Event Revenue</div>
<div style="position:absolute;left:152.50px;top:504.14px;font-size:6.60px;line-height:7.92px;color:#f5ecd0;font-weight:normal;white-space:nowrap;">Event Profit Summary</div>
<div style="position:absolute;left:232.00px;top:504.14px;font-size:6.60px;line-height:7.92px;color:#eef0dc;font-weight:normal;white-space:nowrap;">Chart Data</div>
<div style="position:absolute;left:276px;top:504px;width:7px;height:5px;background:#c9d8ea;border-radius:1px;"></div>
<div style="position:absolute;left:356px;top:503.5px;width:3.5px;height:7px;background:#fff;border:1px solid #888;"></div>
<div style="position:absolute;left:359.5px;top:503px;width:9px;height:8px;background:linear-gradient(#f5f6f8,#e3e6ea);"></div>
<svg style="position:absolute;left:362.50px;top:505.00px;overflow:visible" width="2.60" height="4.20" viewBox="0 0 2.60 4.20"><path d="M2.60 0 V4.20 L0 2.10 Z" fill="#222"/></svg>
<div style="position:absolute;left:368px;top:503px;width:301px;height:8px;background:linear-gradient(#e3e7ec,#eef1f4);"></div>
<div style="position:absolute;left:370px;top:503.5px;width:258.5px;height:7.5px;background:linear-gradient(#f7f8fa,#e6e9ed);border:0.8px solid #b4bac3;border-radius:1.5px;"></div>
<div style="position:absolute;left:496px;top:505px;width:1px;height:4px;background:#a6acb4;"></div>
<div style="position:absolute;left:498px;top:505px;width:1px;height:4px;background:#a6acb4;"></div>
<div style="position:absolute;left:500px;top:505px;width:1px;height:4px;background:#a6acb4;"></div>
<svg style="position:absolute;left:659.50px;top:505.00px;overflow:visible" width="2.60" height="4.20" viewBox="0 0 2.60 4.20"><path d="M0 0 V4.20 L2.60 2.10 Z" fill="#222"/></svg>
<div style="position:absolute;left:664.5px;top:503.5px;width:4px;height:7px;background:#fff;border:0.8px solid #888;border-radius:1px;"></div>
<div style="position:absolute;left:669px;top:503px;width:11px;height:8px;background:#e4e7eb;"></div>
<div style="position:absolute;left:0px;top:511px;width:680px;height:11.5px;background:linear-gradient(#e9ecf0,#dfe3e8);border-top:1px solid #c4c9d0;"></div>
<div style="position:absolute;left:4.40px;top:514.22px;font-size:5.80px;line-height:6.96px;color:#505a6a;font-weight:normal;white-space:nowrap;">Ready</div>
<div style="position:absolute;left:29.10px;top:514.16px;font-size:5.90px;line-height:7.08px;color:#505a6a;font-weight:normal;white-space:nowrap;">Calculate</div>
<div style="position:absolute;left:59.5px;top:512.5px;width:0.8px;height:9px;background:#c4c9d0;"></div>
<div style="position:absolute;left:551px;top:512.5px;width:0.8px;height:9px;background:#c4c9d0;"></div>
<div style="position:absolute;left:554.2px;top:512.3px;width:10px;height:9.6px;background:linear-gradient(#fdeeb0,#fbd970);border:0.8px solid #e0b040;"></div>
<svg style="position:absolute;left:556.5px;top:514.5px" width="6" height="5" viewBox="0 0 6 5">
<rect x="0.3" y="0.3" width="5.4" height="4.4" fill="#fff" stroke="#777" stroke-width="0.5"/>
<path d="M0.3 2.5 H5.7 M2 0.3 V4.7 M4 0.3 V4.7" stroke="#888" stroke-width="0.4"/></svg>
<div style="position:absolute;left:566px;top:514px;width:7.5px;height:6px;background:#dcdfe4;border:0.8px solid #8a9099;"></div>
<div style="position:absolute;left:568px;top:515.5px;width:3.5px;height:3px;background:#fff;"></div>
<div style="position:absolute;left:575.5px;top:514px;width:7.5px;height:6px;background:#e8eaee;border:0.8px solid #8a9099;"></div>
<div style="position:absolute;left:578.8px;top:514px;width:0.8px;height:6px;background:#8a9099;"></div>
<div style="position:absolute;left:589.00px;top:514.16px;font-size:5.90px;line-height:7.08px;color:#5a6270;font-weight:normal;white-space:nowrap;">60%</div>
<div style="position:absolute;left:608px;top:512.8px;width:8px;height:8px;border-radius:50%;border:0.8px solid #7a7f86;background:linear-gradient(#fbfbfc,#e4e7ea);"></div>
<div style="position:absolute;left:610px;top:516.4px;width:4px;height:0.9px;background:#333;"></div>
<div style="position:absolute;left:616px;top:516.6px;width:53px;height:0.7px;background:#a9aeb5;"></div>
<div style="position:absolute;left:643px;top:515px;width:0.7px;height:3px;background:#a9aeb5;"></div>
<div style="position:absolute;left:630.6px;top:513px;width:4.2px;height:7px;background:linear-gradient(#ffffff,#e6e8eb);border:0.8px solid #80858c;border-radius:1px 1px 2.5px 2.5px;"></div>
<div style="position:absolute;left:669.5px;top:512.8px;width:8px;height:8px;border-radius:50%;border:0.8px solid #7a7f86;background:linear-gradient(#fbfbfc,#e4e7ea);"></div>
<div style="position:absolute;left:671.5px;top:516.4px;width:4px;height:0.9px;background:#333;"></div>
<div style="position:absolute;left:673.05px;top:514.85px;width:0.9px;height:4px;background:#333;"></div>
<div style="position:absolute;left:0px;top:522.5px;width:680px;height:1.5px;background:#1a1a1a;"></div>
</body></html>
